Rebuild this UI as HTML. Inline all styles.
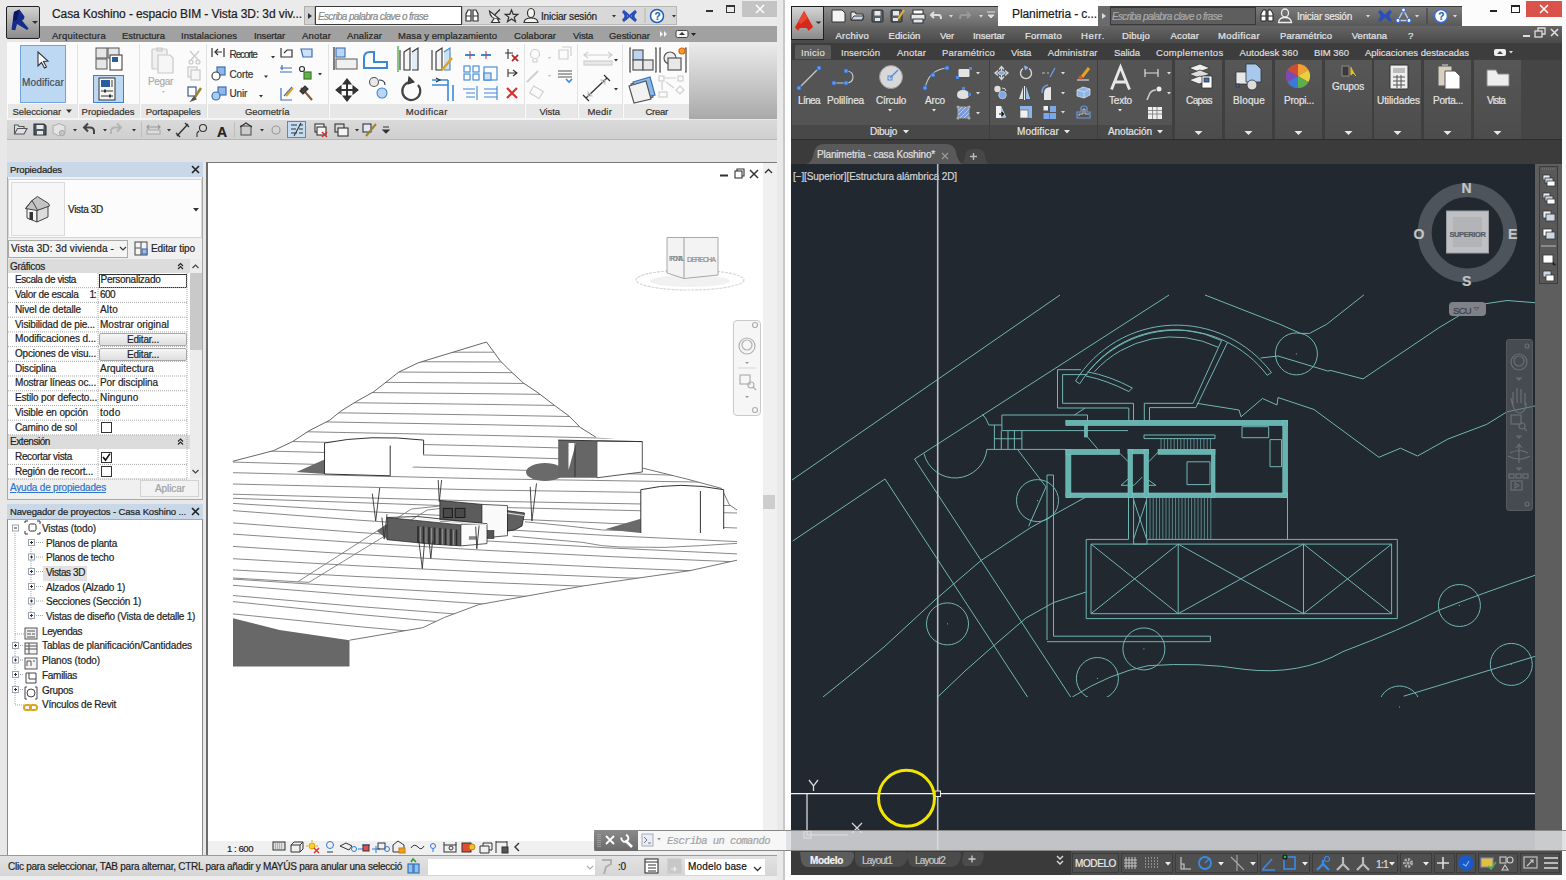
<!DOCTYPE html>
<html><head><meta charset="utf-8">
<style>
*{box-sizing:border-box;margin:0;padding:0}
html,body{width:1566px;height:880px;overflow:hidden;background:#fbfbfb;font-family:"Liberation Sans",sans-serif;font-size:10px;color:#222;position:relative}
.a{position:absolute}
.t{position:absolute;white-space:nowrap;line-height:1;-webkit-text-stroke:0.2px currentColor}
svg{position:absolute;left:0;top:0;overflow:visible}
</style></head>
<body>
<div class="a" style="left:0px;top:0px;width:785px;height:880px;background:#e8e8e8;"></div>
<div class="a" style="left:0px;top:0px;width:785px;height:26px;background:#ebebeb;"></div>
<div class="a" style="left:6px;top:6px;width:34px;height:33px;border:1px solid #222;border-radius:2px;background:linear-gradient(#d2d2d2,#8a8a8a)"></div>
<svg width="1566" height="880"><path d="M14 12 L19.4 9.5 L24.5 16.4 L24 19 L22 20.4 L28.6 28.6 L27 30 L17 24 L15.3 30.2 L11.5 29.7 Z" fill="#142c8c"/><path d="M14 12 L19.4 9.5 L17 20 L13 21 Z" fill="#0a1660"/><path d="M32 21 L38 21 L35 24 Z" fill="#333"/></svg>
<div class="t" style="left:52.0px;top:8.04px;font-size:12px;color:#1b1b1b;letter-spacing:-0.090px;">Casa Koshino - espacio BIM - Vista 3D: 3d viv...</div>
<div class="a" style="left:304px;top:6px;width:11px;height:19px;background:#d3d3d3;border:1px solid #b0b0b0"></div>
<svg width="1566" height="880"><path d="M308 13 L312 16 L308 19 Z" fill="#333"/></svg>
<div class="a" style="left:315px;top:6px;width:147px;height:19px;background:#fff;border:1.5px solid #3a3a3a"></div>
<div class="t" style="left:318.0px;top:11.73px;font-size:10px;color:#8a8a8a;font-style:italic;letter-spacing:-0.654px;">Escriba palabra clave o frase</div>
<div class="a" style="left:462px;top:6px;width:215px;height:19px;background:#d8d8d8;border:1px solid #b8b8b8"></div>
<svg width="1566" height="880" fill="none" stroke="#333" stroke-width="1.2">
<path d="M466 21 L466 14 L468 10 L471 10 L471 21 Z M473 21 L473 10 L476 10 L478 14 L478 21 Z" fill="#fff"/><path d="M466 16 L471 16 M473 16 L478 16"/>
<path d="M489.5 11 Q490 19.5 499.5 19 Z" fill="#f4f4f4"/><path d="M494 18.5 L491.5 22.5 L499.5 22.5 L497.5 19" fill="#f4f4f4"/><path d="M494.5 15 L500 9.5"/>
<path d="M511.5 10 L513.2 14.3 L517.8 14.4 L514.2 17.2 L515.5 21.6 L511.5 19 L507.5 21.6 L508.8 17.2 L505.2 14.4 L509.8 14.3 Z"/>
<ellipse cx="531" cy="13" rx="3.5" ry="4.5" fill="#f4f4f4"/><path d="M524 22.5 Q524.5 18 531 18 Q537.5 18 538 22.5 Z" fill="#f4f4f4"/>
<path d="M612 15 L616 15 L614 17.5 Z" fill="#333" stroke="none"/>
<path d="M623 11 Q629 16 623 21 M636 11 Q630 16 636 21" stroke="#2a4fb8" stroke-width="3"/><path d="M625 12 L634 20 M634 12 L625 20" stroke="#2a4fb8" stroke-width="1.8"/>
<line x1="645" y1="8" x2="645" y2="23" stroke="#bdbdbd"/>
<circle cx="657" cy="16" r="6.5" stroke="#1f5fb8" stroke-width="1.5" fill="#fff"/>
<path d="M672 15 L676 15 L674 17.5 Z" fill="#333" stroke="none"/>
</svg>
<div class="t" style="left:654.5px;top:12.23px;font-size:10px;color:#1f5fb8;font-weight:700;">?</div>
<div class="t" style="left:541.0px;top:12.23px;font-size:10px;color:#1e1e1e;letter-spacing:-0.169px;">Iniciar sesión</div>
<div class="a" style="left:706px;top:10px;width:7px;height:2px;background:#333;"></div>
<div class="a" style="left:726px;top:5px;width:9px;height:8px;background:transparent;border:1.5px solid #333;border-top-width:2px"></div>
<div class="a" style="left:742px;top:1px;width:36px;height:16px;background:#c4c4c4;"></div>
<svg width="1566" height="880"><path d="M756 5 L764 13 M764 5 L756 13" stroke="#fff" stroke-width="1.5"/></svg>
<div class="a" style="left:40px;top:26px;width:738px;height:16px;background:#a1a1a1;"></div>
<div class="t" style="left:52.0px;top:30.66px;font-size:9.5px;color:#262626;letter-spacing:0.230px;">Arquitectura</div>
<div class="t" style="left:122.0px;top:30.66px;font-size:9.5px;color:#262626;letter-spacing:-0.030px;">Estructura</div>
<div class="t" style="left:181.0px;top:30.66px;font-size:9.5px;color:#262626;letter-spacing:0.042px;">Instalaciones</div>
<div class="t" style="left:254.0px;top:30.66px;font-size:9.5px;color:#262626;letter-spacing:-0.152px;">Insertar</div>
<div class="t" style="left:302.0px;top:30.66px;font-size:9.5px;color:#262626;letter-spacing:0.167px;">Anotar</div>
<div class="t" style="left:347.0px;top:30.66px;font-size:9.5px;color:#262626;letter-spacing:0.084px;">Analizar</div>
<div class="t" style="left:398.0px;top:30.66px;font-size:9.5px;color:#262626;letter-spacing:0.066px;">Masa y emplazamiento</div>
<div class="t" style="left:514.0px;top:30.66px;font-size:9.5px;color:#262626;letter-spacing:0.031px;">Colaborar</div>
<div class="t" style="left:573.0px;top:30.66px;font-size:9.5px;color:#262626;letter-spacing:-0.191px;">Vista</div>
<div class="t" style="left:609.0px;top:30.66px;font-size:9.5px;color:#262626;letter-spacing:-0.021px;">Gestionar</div>
<svg width="1566" height="880"><path d="M660 31 L663 34 L660 37 Z M664 31 L667 34 L664 37 Z" fill="#f4f4f4"/>
<rect x="676" y="30.5" width="12" height="7" rx="1.5" fill="#f4f4f4" stroke="#444"/><path d="M679 35 L682 32 L685 35 Z" fill="#333"/><path d="M691 33 L696 33 L693.5 36 Z" fill="#222"/></svg>
<div class="a" style="left:7px;top:42px;width:682px;height:77px;background:#fbfbfb;"></div>
<div class="a" style="left:689px;top:42px;width:88px;height:77px;background:linear-gradient(#ececec,#a9a9a9);"></div>
<div class="a" style="left:8px;top:104px;width:69px;height:14px;background:#e7e7e7;"></div>
<div class="a" style="left:79px;top:104px;width:60px;height:14px;background:#e7e7e7;"></div>
<div class="a" style="left:141px;top:104px;width:65px;height:14px;background:#e7e7e7;"></div>
<div class="a" style="left:208px;top:104px;width:120px;height:14px;background:#e7e7e7;"></div>
<div class="a" style="left:330px;top:104px;width:194px;height:14px;background:#e7e7e7;"></div>
<div class="a" style="left:526px;top:104px;width:51px;height:14px;background:#e7e7e7;"></div>
<div class="a" style="left:579px;top:104px;width:43px;height:14px;background:#e7e7e7;"></div>
<div class="a" style="left:624px;top:104px;width:65px;height:14px;background:#e7e7e7;"></div>
<div class="a" style="left:77px;top:44px;width:1px;height:74px;background:#e2e2e2;"></div>
<div class="a" style="left:139px;top:44px;width:1px;height:74px;background:#e2e2e2;"></div>
<div class="a" style="left:206px;top:44px;width:1px;height:74px;background:#e2e2e2;"></div>
<div class="a" style="left:328px;top:44px;width:1px;height:74px;background:#e2e2e2;"></div>
<div class="a" style="left:524px;top:44px;width:1px;height:74px;background:#e2e2e2;"></div>
<div class="a" style="left:577px;top:44px;width:1px;height:74px;background:#e2e2e2;"></div>
<div class="a" style="left:622px;top:44px;width:1px;height:74px;background:#e2e2e2;"></div>
<div class="a" style="left:7px;top:118px;width:682px;height:2px;background:#f4f4f4;"></div>
<div class="t" style="left:12.6px;top:106.66px;font-size:9.5px;color:#333;letter-spacing:-0.113px;">Seleccionar</div>
<svg width="1566" height="880"><path d="M66 109.5 L72 109.5 L69 113 Z" fill="#333"/></svg>
<div class="t" style="left:81.6px;top:106.66px;font-size:9.5px;color:#333;letter-spacing:-0.033px;">Propiedades</div>
<div class="t" style="left:145.7px;top:106.66px;font-size:9.5px;color:#333;letter-spacing:-0.082px;">Portapapeles</div>
<div class="t" style="left:245.0px;top:106.66px;font-size:9.5px;color:#333;letter-spacing:-0.043px;">Geometría</div>
<div class="t" style="left:405.8px;top:106.66px;font-size:9.5px;color:#333;letter-spacing:0.384px;">Modificar</div>
<div class="t" style="left:539.4px;top:106.66px;font-size:9.5px;color:#333;letter-spacing:-0.091px;">Vista</div>
<div class="t" style="left:587.4px;top:106.66px;font-size:9.5px;color:#333;letter-spacing:0.167px;">Medir</div>
<div class="t" style="left:645.4px;top:106.66px;font-size:9.5px;color:#333;letter-spacing:-0.233px;">Crear</div>
<div class="a" style="left:20px;top:45px;width:46px;height:58px;background:#bdd8f3;border:1px solid #6da3df"></div>
<svg width="1566" height="880"><path d="M38 52 L38 66 L41.5 62.5 L44.5 68 L46.5 67 L43.5 61.5 L48 61 Z" fill="#fff" stroke="#333" stroke-width="1.1"/></svg>
<div class="t" style="left:22.0px;top:77.83px;font-size:10px;color:#3c4b5a;letter-spacing:0.158px;">Modificar</div>
<svg width="1566" height="880">
<rect x="96" y="48" width="11" height="10" fill="#e6e6e6" stroke="#555"/><rect x="108" y="48" width="11" height="10" fill="#e6e6e6" stroke="#555"/>
<rect x="96" y="59" width="11" height="10" fill="#e6e6e6" stroke="#555"/><rect x="110" y="55" width="12" height="15" fill="#fff" stroke="#333"/><rect x="112" y="57" width="6" height="5" fill="#2a5ca0"/>
</svg>
<div class="a" style="left:93px;top:75px;width:31px;height:28px;background:#bdd8f3;border:1px solid #3c7fd2"></div>
<svg width="1566" height="880"><rect x="99" y="78" width="16" height="22" fill="#f5f5f5" stroke="#333"/><rect x="101" y="80" width="9" height="7" fill="#2a5ca0"/><rect x="111" y="80" width="2" height="7" fill="#999"/>
<path d="M101 91 L113 91 M101 96 L113 96" stroke="#333"/><rect x="104" y="89.5" width="2" height="3" fill="#333"/><rect x="109" y="94.5" width="2" height="3" fill="#333"/></svg>
<svg width="1566" height="880" fill="none" stroke="#c9c9c9" stroke-width="1.2">
<rect x="152" y="49" width="15" height="20" rx="1" fill="#f0f0f0"/><path d="M157 48 L162 48 L162 51 L157 51 Z" fill="#e0e0e0"/><path d="M158 55 L170 55 L173 58 L173 73 L158 73 Z" fill="#f6f6f6"/>
<path d="M190 51 L199 61 M199 51 L190 61"/><circle cx="191" cy="62" r="2"/><circle cx="198" cy="62" r="2"/>
<rect x="188" y="67" width="9" height="10" fill="#f6f6f6"/><rect x="191" y="70" width="9" height="10" fill="#f6f6f6"/>
<path d="M162 91 L165 91 L163.5 93 Z" fill="#bbb" stroke="none"/>
<rect x="188" y="87" width="8" height="9" fill="#fff" stroke="#3a5a8a"/><path d="M193 100 L201 88" stroke="#a08030" stroke-width="2.5"/><path d="M191 101 L194 97 L196 99 Z" fill="#555" stroke="#555"/>
</svg>
<div class="t" style="left:148.0px;top:77.23px;font-size:10px;color:#ababab;letter-spacing:-0.338px;">Pegar</div>
<svg width="1566" height="880" stroke="#333" fill="none" stroke-width="1.2">
<path d="M212 48 L212 57 M215 52 L222 52 M218 49 L215 52 L218 55 M224 48 L224 57"/>
<rect x="217" y="67" width="8" height="8" fill="#8fb8e8" stroke="#3a70b8"/><circle cx="216" cy="76" r="4" fill="#fff" stroke="#444"/>
<rect x="218" y="87" width="8" height="8" fill="#8fb8e8" stroke="#3a70b8"/><circle cx="216" cy="96" r="4" fill="#a8cbee" stroke="#3a70b8"/>
<path d="M271 56 L275 56 L273 58.5 Z M264 75.5 L268 75.5 L266 78 Z M259 95 L263 95 L261 97.5 Z" fill="#333" stroke="none"/>
<path d="M281 48 L281 57 L292 57 L292 50 L287 50 L284 53" /><path d="M301 49 L312 49 L312 57 L303 57 Z" fill="#cfe0f5" stroke="#3a70b8"/>
<path d="M280 68 L292 68 M280 72 L292 72 M282 65 L282 70" stroke="#3a70b8"/><circle cx="302" cy="69" r="2.5"/><rect x="304" y="72" width="7" height="7" fill="#6ab04a" stroke="#3a7a2a"/>
<path d="M318 73 L322 73 L320 75.5 Z" fill="#333" stroke="none"/>
<path d="M281 88 L281 100 L292 100 M284 96 L292 87" stroke="#3a70b8"/><path d="M286 96 L293 88" stroke="#e0a020" stroke-width="2"/>
<path d="M301 88 L306 93 L312 100" stroke="#8a5a3a" stroke-width="2.2"/><path d="M300 91 L305 86 L308 89 L303 94 Z" fill="#444"/>
</svg>
<div class="t" style="left:229.6px;top:50.03px;font-size:10px;color:#333;letter-spacing:-1.145px;">Recorte</div>
<div class="t" style="left:229.6px;top:69.53px;font-size:10px;color:#333;letter-spacing:-0.191px;">Corte</div>
<div class="t" style="left:229.6px;top:89.14px;font-size:10px;color:#333;letter-spacing:-0.211px;">Unir</div>
<svg width="1566" height="880" stroke="#333" fill="none" stroke-width="1.1">
<path d="M334 47 L334 70" stroke="#555" stroke-width="1.5"/><rect x="336" y="48" width="9" height="9" fill="#bcd5f0" stroke="#3a70b8"/><rect x="336" y="59" width="21" height="10" fill="#f0f0f0" stroke="#666"/>
<path d="M364 68 L364 58 Q364 52 370 52 L374 52 L374 62 L387 62 L387 68 Z" stroke="#3a88d8" stroke-width="2"/>
<path d="M400 50 L400 70 M404 52 L410 48 L410 70 L404 70 Z" fill="#f5f5f5"/><path d="M398 46 L398 72" stroke="#48a848" stroke-width="1.3"/><path d="M412 52 L418 48 L418 70 L412 70" fill="#e0ecf8"/>
<path d="M432 50 L432 70 M436 52 L442 48 L442 70 L436 70 Z" fill="#f5f5f5"/><path d="M444 52 L450 48 L450 70 L444 70" fill="#cfe0f5" stroke="#3a88d8"/><path d="M442 70 L452 58" stroke="#e0a020" stroke-width="2.5"/>
<path d="M465 55 L475 55 M481 55 L491 55" stroke="#3a88d8" stroke-width="2"/><path d="M470 51 L470 59 M486 51 L486 59" stroke="#d04040"/>
<path d="M508 49 L508 59 M505 53 L513 53 M512 55 L518 61 M518 55 L512 61" /><path d="M512 55 L518 61 M518 55 L512 61" stroke="#d02020" stroke-width="1.5"/>
<path d="M347 80 L347 101 M337 90 L358 90" stroke="#333" stroke-width="2"/><path d="M343 84 L347 79 L351 84 Z M343 96 L347 101 L351 96 Z M341 86 L336 90 L341 94 Z M353 86 L358 90 L353 94 Z" fill="#333"/>
<circle cx="374" cy="82" r="4.5" fill="#e8e8e8" stroke="#555"/><circle cx="382" cy="93" r="5" fill="#bcd5f0" stroke="#3a88d8"/><path d="M379 80 Q385 80 385 85" />
<path d="M411 82 A9 9 0 1 0 418 85" stroke-width="2.2" stroke="#444"/><path d="M409 77 L414 82 L408 84 Z" fill="#444"/>
<path d="M432 80 L448 80 M432 85 L448 85 M448 80 L448 101 M453 85 L453 101" stroke="#3a88d8" stroke-width="1.6"/><path d="M436 78 L440 80 L436 82" />
<rect x="464" y="66" width="6" height="6" stroke="#3a88d8"/><rect x="473" y="66" width="6" height="6" stroke="#3a88d8"/><rect x="464" y="74" width="6" height="6" stroke="#3a88d8"/><rect x="473" y="74" width="6" height="6" stroke="#3a88d8"/>
<rect x="484" y="67" width="13" height="13" stroke="#3a88d8"/><rect x="484" y="73" width="7" height="7" fill="#cfe0f5" stroke="#3a88d8"/>
<path d="M508 69 L508 77 M508 73 L517 73 M513 70 L517 73 L513 76" />
<path d="M463 89 L475 89 M466 93 L475 93 M466 97 L475 97 M477 86 L477 100" stroke="#3a88d8"/>
<path d="M484 89 L497 89 M484 93 L497 93 M484 97 L497 97 M497 86 L497 100" stroke="#3a88d8"/>
<path d="M507 88 L517 98 M517 88 L507 98" stroke="#d83030" stroke-width="2.2"/>
</svg>
<svg width="1566" height="880" stroke="#cfcfcf" fill="none" stroke-width="1.2">
<circle cx="535" cy="54" r="4.5"/><path d="M533 59 L533 62 L537 62 L537 59"/><path d="M548 57 L551 57 L549.5 59 Z" fill="#bbb" stroke="none"/>
<path d="M559 50 L568 50 L568 59 L559 59 Z M562 47 L571 47 L571 56"/>
<path d="M529 80 L538 71 M531 78 L527 82" stroke-width="2"/><path d="M548 75 L551 75 L549.5 77 Z" fill="#bbb" stroke="none"/>
<path d="M558 71 L572 71 M558 74 L572 74 M558 77 L572 77" stroke="#555"/><path d="M566 79 L569 82 L572 79" stroke="#3a88d8" stroke-width="1.6"/>
<rect x="531" y="88" width="11" height="8" transform="rotate(30 536 92)"/>
<path d="M584 55 L612 55 M588 52 L584 55 L588 58 M608 52 L612 55 L608 58"/><rect x="584" y="61" width="28" height="4" fill="#e8e8e8"/>
<path d="M614 59 L618 59 L616 61.5 Z M614 88 L618 88 L616 90.5 Z" fill="#333" stroke="none"/>
<path d="M586 98 L607 78 M583 95 L589 101 M604 75 L610 81" stroke="#333" stroke-width="1.3"/><path d="M588 96 L592 96 L588 92 Z M605 80 L601 80 L605 84 Z" fill="#333"/>
<path d="M631 48 L630 48 L630 72 L631 72 M655 48 L656 48 L656 72 L655 72" stroke="#444"/><rect x="633" y="50" width="10" height="10" fill="#bcd5f0" stroke="#555"/><rect x="633" y="60" width="10" height="10" fill="#e8e8e8" stroke="#555"/><rect x="643" y="60" width="10" height="10" fill="#e8e8e8" stroke="#555"/>
<path d="M661 48 L660 48 L660 72 L661 72 M685 48 L686 48 L686 72 L685 72" stroke="#444"/><circle cx="670" cy="58" r="6" fill="#eee" stroke="#555"/><rect x="668" y="58" width="13" height="12" fill="#e8e8e8" stroke="#555"/><circle cx="682" cy="51" r="3" fill="#f0a020" stroke="#e06010"/>
<path d="M631 84 L648 79 L653 97 L636 101 Z" fill="#e0e0e0" stroke="#555"/><path d="M633 82 L650 77 L655 95 L638 99 Z" fill="#8ab8e8" stroke="#3a70b8"/><path d="M629 86 L646 81 L651 99 L634 103 Z" fill="#f2f2f2" stroke="#555"/>
<rect x="659" y="76" width="5" height="5"/><rect x="678" y="76" width="5" height="5"/><rect x="659" y="92" width="8" height="5"/><path d="M665 78 L676 78 M662 82 L662 90 M666 82 L674 88 M676 90 L680 94 L684 90 L680 86 Z"/>
</svg>
<div class="a" style="left:7px;top:120px;width:770px;height:19px;background:linear-gradient(#dadada,#cfcfcf);"></div>
<div class="a" style="left:7px;top:139px;width:770px;height:1px;background:#b6b6b6;"></div>
<div class="a" style="left:7px;top:140px;width:770px;height:22px;background:#e3e3e3;"></div>
<div class="a" style="left:287px;top:121px;width:19px;height:17px;background:#c5dcf3;border:1px solid #4c8ad8"></div>
<div class="a" style="left:141px;top:122px;width:1px;height:15px;background:#bdbdbd;"></div>
<div class="a" style="left:234px;top:122px;width:1px;height:15px;background:#bdbdbd;"></div>
<svg width="1566" height="880" stroke="#333" fill="none" stroke-width="1.1">
<path d="M14.5 134 L14.5 125 L18 125 L19 126.5 L24 126.5 L24 128 M14.5 134 L17.5 128.5 L27 128.5 L24 134 Z" fill="#dfe3e8" stroke="#555" stroke-width="1.1"/>
<path d="M34 124 L44 124 L46 126 L46 135 L34 135 Z" fill="#4c5866" stroke="#2a3038"/><rect x="36.5" y="125" width="7" height="4" fill="#e8e8e8" stroke="none"/><rect x="37" y="131" width="6" height="3.5" fill="#e8e8e8" stroke="none"/>
<path d="M53 126 L59 123.5 L65 126 L65 133 L59 136 L53 133 Z" stroke="#b0b0b0" fill="#e4e4e4"/><circle cx="62" cy="133" r="2.5" fill="#c8c8c8" stroke="#aaa"/><path d="M73 129 L77 129 L75 131.5 Z M103 129 L107 129 L105 131.5 Z M132 129 L136 129 L134 131.5 Z M167 129 L171 129 L169 131.5 Z M260 129 L264 129 L262 131.5 Z M355 129 L359 129 L357 131.5 Z" fill="#333" stroke="none"/>
<path d="M85 127.5 L90 127.5 Q94 127.5 94 131.5 L94 134 M88 123.5 L84 127.5 L88 131.5" stroke-width="2" stroke="#444" fill="none"/>
<path d="M120 127.5 L115 127.5 Q111 127.5 111 131.5 L111 134 M117 123.5 L121 127.5 L117 131.5" stroke-width="2" stroke="#b4b4b4" fill="none"/>
<path d="M147 127 L160 127 M149 125 L147 127 L149 129 M158 125 L160 127 L158 129" stroke="#999" stroke-width="1.2" fill="none"/><rect x="147" y="130" width="13" height="4" fill="#ddd" stroke="#aaa"/>
<path d="M177 136 L188 124 M176 133 L180 137 M185 123 L189 127" stroke-width="1.4"/>
<circle cx="203" cy="128" r="3.5"/><path d="M197 133 L197 137 M197 133 L199 131"/>
<rect x="241" y="126" width="10" height="9" fill="#ccc" stroke="#555"/><path d="M240 127 L246 123 L252 127"/>
<circle cx="276" cy="130" r="4" stroke="#999"/>
<path d="M291 125 L297 125 M291 129 L296 129 M291 133 L297 133 M299 125 L303 125 M299 129 L303 129 M299 133 L303 133 M294 136 L301 123" stroke="#333"/>
<rect x="315" y="124" width="9" height="8" fill="#f4f4f4"/><rect x="317" y="127" width="9" height="8" fill="#f4f4f4"/><path d="M322 132 L327 137 M327 132 L322 137" stroke="#d83030" stroke-width="1.6"/>
<rect x="335" y="124" width="9" height="8"/><rect x="338" y="128" width="10" height="8" fill="#f4f4f4"/>
<rect x="363" y="124" width="8" height="8" fill="#dde8f4"/><path d="M366 136 L376 124" stroke="#a08030" stroke-width="2"/>
<path d="M383 127 L389 127 M383 130 L389 130 L386 133 Z" fill="#333"/>
</svg>
<div class="t" style="left:217.0px;top:124.85px;font-size:14px;color:#222;font-weight:700;">A</div>
<div class="a" style="left:7px;top:162px;width:196px;height:15px;background:#c8d8e9;"></div>
<div class="t" style="left:10.0px;top:165.36px;font-size:9.5px;color:#222;letter-spacing:-0.124px;">Propiedades</div>
<svg width="1566" height="880"><path d="M192 166 L199 173 M199 166 L192 173" stroke="#222" stroke-width="1.6"/></svg>
<div class="a" style="left:7px;top:177px;width:196px;height:323px;background:#f0f0f0;border:1px solid #a9a9a9;border-top:none"></div>
<div class="a" style="left:8px;top:179px;width:194px;height:59px;background:#fcfcfc;border:1px solid #d4d4d4"></div>
<div class="a" style="left:11px;top:182px;width:54px;height:54px;background:#f6f6f6;border:1px solid #dadada"></div>
<svg width="1566" height="880">
<path d="M27 207.5 L27 218 L37 222 L37 210 L32 202 Z" fill="#f4f4f4" stroke="#444" stroke-width="1"/>
<path d="M37 222 L48 217 L48 206 L37 210 Z" fill="#dcdcdc" stroke="#444" stroke-width="1"/>
<path d="M25.5 208.5 L32 200.5 L37.4 196.5 L48.6 203.5 L49.5 206 L37 210.5 Z" fill="#c4c4c4" stroke="#444" stroke-width="1"/>
<path d="M25.5 208.5 L32 200.5 L38 211" fill="none" stroke="#444" stroke-width="1"/>
<rect x="29.5" y="212" width="3.5" height="8" fill="#333"/>
<path d="M193 208 L199 208 L196 211.5 Z" fill="#333"/>
</svg>
<div class="t" style="left:68.0px;top:204.73px;font-size:10px;color:#222;letter-spacing:-0.328px;">Vista 3D</div>
<div class="a" style="left:8px;top:240px;width:120px;height:18px;background:#f4f4f4;border:1px solid #a9a9a9"></div>
<div class="a" style="left:9px;top:241px;width:108px;height:16px;overflow:hidden">
<div class="t" style="left:2.0px;top:2.64px;font-size:10px;color:#222;letter-spacing:0.134px;">Vista 3D: 3d vivienda - s</div>
</div>
<svg width="1566" height="880" fill="none" stroke="#333" stroke-width="1.1">
<path d="M120 247 L123 250 L126 247"/>
<rect x="135" y="242" width="12" height="13" fill="#f4f4f4" stroke="#555"/><path d="M141 242 L141 255 M135 248 L141 248" stroke="#555"/><rect x="142" y="249" width="5" height="5" fill="#9bbbe0" stroke="#3a6fb0"/>
</svg>
<div class="t" style="left:151.0px;top:243.63px;font-size:10px;color:#222;letter-spacing:-0.094px;">Editar tipo</div>
<div class="a" style="left:8px;top:259px;width:182px;height:219px;background:#ffffff;"></div>
<div class="a" style="left:190px;top:259px;width:12px;height:219px;background:#ececec;"></div>
<div class="a" style="left:190px;top:273px;width:12px;height:77px;background:#c9c9c9;"></div>
<svg width="1566" height="880" fill="none" stroke="#444" stroke-width="1.2">
<path d="M192.5 268 L195.5 265 L198.5 268"/><path d="M192.5 470 L195.5 473 L198.5 470"/>
</svg>
<div class="a" style="left:8px;top:259px;width:182px;height:14px;background:#dcdcdc;"></div>
<div class="t" style="left:10.0px;top:261.54px;font-size:10px;color:#222;letter-spacing:-0.279px;">Gráficos</div>
<div class="a" style="left:8px;top:434.7px;width:182px;height:14.3px;background:#dcdcdc;"></div>
<div class="t" style="left:10.0px;top:437.24px;font-size:10px;color:#222;letter-spacing:-0.436px;">Extensión</div>
<svg width="1566" height="880" fill="none" stroke="#222" stroke-width="1.1">
<path d="M178 266 L180.5 263.5 L183 266 M178 269 L180.5 266.5 L183 269"/>
<path d="M178 441.5 L180.5 439 L183 441.5 M178 444.5 L180.5 442 L183 444.5"/>
</svg>
<div class="t" style="left:15.0px;top:275.44px;font-size:10px;color:#222;letter-spacing:-0.418px;">Escala de vista</div>
<div class="a" style="left:99px;top:273.5px;width:88px;height:14px;background:#fff;border:1px solid #333"></div>
<div class="t" style="left:100.5px;top:275.44px;font-size:10px;color:#222;letter-spacing:-0.260px;">Personalizado</div>
<div class="t" style="left:15.0px;top:290.16px;font-size:10px;color:#222;letter-spacing:-0.314px;">Valor de escala</div>
<div class="t" style="left:100.0px;top:290.16px;font-size:10px;color:#222;letter-spacing:-0.562px;">600</div>
<div class="t" style="left:15.0px;top:304.88px;font-size:10px;color:#222;letter-spacing:-0.148px;">Nivel de detalle</div>
<div class="t" style="left:100.0px;top:304.88px;font-size:10px;color:#222;letter-spacing:0.191px;">Alto</div>
<div class="t" style="left:15.0px;top:319.60px;font-size:10px;color:#222;letter-spacing:-0.153px;">Visibilidad de pie...</div>
<div class="t" style="left:100.0px;top:319.60px;font-size:10px;color:#222;">Mostrar original</div>
<div class="t" style="left:15.0px;top:334.31px;font-size:10px;color:#222;letter-spacing:-0.096px;">Modificaciones d...</div>
<div class="a" style="left:99px;top:332.88px;width:88px;height:13px;background:linear-gradient(#f6f6f6,#dedede);border:1px solid #a8a8a8;border-radius:2px"></div>
<div class="t" style="left:127.0px;top:334.81px;font-size:10px;color:#222;letter-spacing:-0.212px;">Editar...</div>
<div class="t" style="left:15.0px;top:349.04px;font-size:10px;color:#222;letter-spacing:-0.213px;">Opciones de visu...</div>
<div class="a" style="left:99px;top:347.6px;width:88px;height:13px;background:linear-gradient(#f6f6f6,#dedede);border:1px solid #a8a8a8;border-radius:2px"></div>
<div class="t" style="left:127.0px;top:349.54px;font-size:10px;color:#222;letter-spacing:-0.212px;">Editar...</div>
<div class="t" style="left:15.0px;top:363.75px;font-size:10px;color:#222;letter-spacing:-0.180px;">Disciplina</div>
<div class="t" style="left:100.0px;top:363.75px;font-size:10px;color:#222;">Arquitectura</div>
<div class="t" style="left:15.0px;top:378.48px;font-size:10px;color:#222;letter-spacing:-0.202px;">Mostrar líneas oc...</div>
<div class="t" style="left:100.0px;top:378.48px;font-size:10px;color:#222;letter-spacing:-0.106px;">Por disciplina</div>
<div class="t" style="left:15.0px;top:393.19px;font-size:10px;color:#222;letter-spacing:-0.172px;">Estilo por defecto...</div>
<div class="t" style="left:100.0px;top:393.19px;font-size:10px;color:#222;letter-spacing:0.176px;">Ninguno</div>
<div class="t" style="left:15.0px;top:407.92px;font-size:10px;color:#222;letter-spacing:-0.143px;">Visible en opción</div>
<div class="t" style="left:100.0px;top:407.92px;font-size:10px;color:#222;letter-spacing:0.258px;">todo</div>
<div class="t" style="left:15.0px;top:422.64px;font-size:10px;color:#222;letter-spacing:-0.148px;">Camino de sol</div>
<div class="a" style="left:101px;top:422.20000000000005px;width:11px;height:11px;background:#fff;border:1px solid #333"></div>
<div class="t" style="left:15.0px;top:452.07px;font-size:10px;color:#222;letter-spacing:-0.335px;">Recortar vista</div>
<div class="a" style="left:101px;top:451.64px;width:11px;height:11px;background:#fff;border:1px solid #333"></div>
<svg width="1566" height="880"><path d="M103 457.1 L105.5 460.1 L110 453.6" stroke="#111" stroke-width="1.6" fill="none"/></svg>
<div class="t" style="left:15.0px;top:466.80px;font-size:10px;color:#222;letter-spacing:-0.225px;">Región de recort...</div>
<div class="a" style="left:101px;top:466.36px;width:11px;height:11px;background:#fff;border:1px solid #333"></div>
<svg width="1566" height="880" fill="none" stroke="#a8a8a8" stroke-width="1" stroke-dasharray="1 1"><path d="M8 287.7 L187 287.7"/><path d="M8 302.4 L187 302.4"/><path d="M8 317.2 L187 317.2"/><path d="M8 331.9 L187 331.9"/><path d="M8 346.6 L187 346.6"/><path d="M8 361.3 L187 361.3"/><path d="M8 376.0 L187 376.0"/><path d="M8 390.8 L187 390.8"/><path d="M8 405.5 L187 405.5"/><path d="M8 420.2 L187 420.2"/><path d="M8 434.9 L187 434.9"/><path d="M8 464.4 L187 464.4"/><path d="M8 479.1 L187 479.1"/><path d="M98 273 L98 434.7 M98 449 L98 478 M187 273 L187 478" stroke-dasharray="1 1"/></svg>
<div class="t" style="left:89.5px;top:290.24px;font-size:10px;color:#222;letter-spacing:-1.422px;">1:</div>
<div class="t" style="left:10.0px;top:483.04px;font-size:10px;color:#2f74d0;letter-spacing:-0.195px;text-decoration:underline;">Ayuda de propiedades</div>
<div class="a" style="left:140px;top:480px;width:59px;height:17px;background:#f2f2f2;border:1px solid #d2d2d2"></div>
<div class="t" style="left:155.0px;top:483.74px;font-size:10px;color:#a0a0a0;letter-spacing:-0.083px;">Aplicar</div>
<div class="a" style="left:7px;top:500px;width:196px;height:4px;background:#e8e8e8;"></div>
<div class="a" style="left:7px;top:504px;width:196px;height:14.5px;background:#c8d8e9;"></div>
<div class="t" style="left:10.0px;top:507.36px;font-size:9.5px;color:#222;letter-spacing:-0.138px;">Navegador de proyectos - Casa Koshino ...</div>
<svg width="1566" height="880"><path d="M192 508 L199 515 M199 508 L192 515" stroke="#222" stroke-width="1.6"/></svg>
<div class="a" style="left:7px;top:518.5px;width:196px;height:337px;background:#ffffff;border:1px solid #8a8a8a;border-top:1px solid #aaa"></div>
<div class="a" style="left:43px;top:566px;width:44px;height:14.5px;background:#e2e2e2;"></div>
<div class="t" style="left:42.0px;top:524.13px;font-size:10px;color:#1e1e1e;letter-spacing:-0.150px;">Vistas (todo)</div>
<div class="t" style="left:46.0px;top:538.84px;font-size:10px;color:#1e1e1e;letter-spacing:-0.220px;">Planos de planta</div>
<div class="t" style="left:46.0px;top:552.94px;font-size:10px;color:#1e1e1e;letter-spacing:-0.248px;">Planos de techo</div>
<div class="t" style="left:46.0px;top:567.84px;font-size:10px;color:#1e1e1e;letter-spacing:-0.403px;">Vistas 3D</div>
<div class="t" style="left:46.0px;top:582.63px;font-size:10px;color:#1e1e1e;letter-spacing:-0.274px;">Alzados (Alzado 1)</div>
<div class="t" style="left:46.0px;top:597.24px;font-size:10px;color:#1e1e1e;letter-spacing:-0.205px;">Secciones (Sección  1)</div>
<div class="t" style="left:46.0px;top:611.94px;font-size:10px;color:#1e1e1e;letter-spacing:-0.275px;">Vistas de diseño (Vista de detalle 1)</div>
<div class="t" style="left:42.0px;top:626.74px;font-size:10px;color:#1e1e1e;letter-spacing:-0.422px;">Leyendas</div>
<div class="t" style="left:42.0px;top:641.24px;font-size:10px;color:#1e1e1e;letter-spacing:-0.118px;">Tablas de planificación/Cantidades</div>
<div class="t" style="left:42.0px;top:656.24px;font-size:10px;color:#1e1e1e;letter-spacing:-0.114px;">Planos (todo)</div>
<div class="t" style="left:42.0px;top:670.94px;font-size:10px;color:#1e1e1e;letter-spacing:-0.279px;">Familias</div>
<div class="t" style="left:42.0px;top:685.74px;font-size:10px;color:#1e1e1e;letter-spacing:-0.299px;">Grupos</div>
<div class="t" style="left:42.0px;top:700.24px;font-size:10px;color:#1e1e1e;letter-spacing:-0.225px;">Vínculos de Revit</div>
<svg width="1566" height="880" fill="none" stroke="#8a8a8a" stroke-width="1"><path d="M15 533 L15 705 L24 705 M31 541 L31 620 M15 634 L24 634" stroke-dasharray="1 1" stroke="#a0a0a0"/><path d="M34 542.5 L44 542.5" stroke-dasharray="1 1" stroke="#a0a0a0"/><rect x="28.5" y="539.5" width="6" height="6" fill="#fff" stroke="#9aa4b0"/><path d="M30 542.5 L33 542.5 M31.5 541.0 L31.5 544.0" stroke="#333"/><path d="M34 557 L44 557" stroke-dasharray="1 1" stroke="#a0a0a0"/><rect x="28.5" y="554" width="6" height="6" fill="#fff" stroke="#9aa4b0"/><path d="M30 557 L33 557 M31.5 555.5 L31.5 558.5" stroke="#333"/><path d="M34 571.5 L44 571.5" stroke-dasharray="1 1" stroke="#a0a0a0"/><rect x="28.5" y="568.5" width="6" height="6" fill="#fff" stroke="#9aa4b0"/><path d="M30 571.5 L33 571.5 M31.5 570.0 L31.5 573.0" stroke="#333"/><path d="M34 586.5 L44 586.5" stroke-dasharray="1 1" stroke="#a0a0a0"/><rect x="28.5" y="583.5" width="6" height="6" fill="#fff" stroke="#9aa4b0"/><path d="M30 586.5 L33 586.5 M31.5 585.0 L31.5 588.0" stroke="#333"/><path d="M34 601 L44 601" stroke-dasharray="1 1" stroke="#a0a0a0"/><rect x="28.5" y="598" width="6" height="6" fill="#fff" stroke="#9aa4b0"/><path d="M30 601 L33 601 M31.5 599.5 L31.5 602.5" stroke="#333"/><path d="M34 615.5 L44 615.5" stroke-dasharray="1 1" stroke="#a0a0a0"/><rect x="28.5" y="612.5" width="6" height="6" fill="#fff" stroke="#9aa4b0"/><path d="M30 615.5 L33 615.5 M31.5 614.0 L31.5 617.0" stroke="#333"/><path d="M18 645.5 L24 645.5" stroke-dasharray="1 1" stroke="#a0a0a0"/><rect x="12.5" y="642.5" width="6" height="6" fill="#fff" stroke="#9aa4b0"/><path d="M14 645.5 L17 645.5 M15.5 644.0 L15.5 647.0" stroke="#333"/><path d="M18 660 L24 660" stroke-dasharray="1 1" stroke="#a0a0a0"/><rect x="12.5" y="657" width="6" height="6" fill="#fff" stroke="#9aa4b0"/><path d="M14 660 L17 660 M15.5 658.5 L15.5 661.5" stroke="#333"/><path d="M18 674.5 L24 674.5" stroke-dasharray="1 1" stroke="#a0a0a0"/><rect x="12.5" y="671.5" width="6" height="6" fill="#fff" stroke="#9aa4b0"/><path d="M14 674.5 L17 674.5 M15.5 673.0 L15.5 676.0" stroke="#333"/><path d="M18 689.5 L24 689.5" stroke-dasharray="1 1" stroke="#a0a0a0"/><rect x="12.5" y="686.5" width="6" height="6" fill="#fff" stroke="#9aa4b0"/><path d="M14 689.5 L17 689.5 M15.5 688.0 L15.5 691.0" stroke="#333"/><rect x="12.5" y="525" width="6" height="6" fill="#fff" stroke="#9aa4b0"/><path d="M14 528 L17 528" stroke="#333"/><path d="M25 523 L25 521 L28 521 M37 521 L40 521 L40 524 M40 532 L40 534 L37 534 M28 534 L25 534 L25 531" stroke="#333"/><rect x="29" y="524" width="7" height="7" rx="1.5" stroke="#333"/><rect x="25" y="628" width="12" height="11" fill="#eee" stroke="#555"/><path d="M27 631 L35 631 M27 634 L31 634 M32 634 L35 634 M27 637 L35 637" stroke="#555"/><rect x="25" y="643" width="12" height="11" fill="#f4f4f4" stroke="#555"/><path d="M25 646 L37 646 M25 649 L37 649 M29 643 L29 654" stroke="#555"/><rect x="25" y="658" width="12" height="11" fill="#f4f4f4" stroke="#555"/><path d="M27 666 L27 661 L31 661 L31 666 M33 661 L35 661" stroke="#555"/><path d="M26 683 L26 673 L36 673 L36 683 Z M29 673 L29 679 L36 679" stroke="#444"/><path d="M27 687 L25 687 L25 699 L27 699 M35 687 L37 687 L37 699 L35 699" stroke="#444"/><circle cx="31" cy="693" r="4" stroke="#444"/><rect x="24" y="705" width="7" height="5" rx="2.5" stroke="#d9a520" stroke-width="2"/><rect x="30" y="705" width="7" height="5" rx="2.5" stroke="#d9a520" stroke-width="2"/></svg>
<div class="a" style="left:206px;top:162px;width:572px;height:694px;background:#ffffff;border-left:2px solid #6c6c6c;border-top:1px solid #7a7a7a"></div>
<div class="a" style="left:763px;top:163px;width:14px;height:678px;background:#f0f0f0;"></div>
<div class="a" style="left:763px;top:495px;width:12px;height:14px;background:#cdcdcd;"></div>
<div class="a" style="left:208px;top:841px;width:569px;height:14px;background:#f0f0f0;"></div>
<svg width="1566" height="880" fill="none" stroke="#333" stroke-width="1.1">
<path d="M720 175.5 L728 175.5" stroke-width="2"/><rect x="735" y="171" width="7" height="7"/><path d="M737 171 L737 169 L744 169 L744 176 L742 176"/>
<path d="M750 170 L758 178 M758 170 L750 178" stroke-width="1.5"/><path d="M765 173 L768.5 169.5 L772 173" stroke-width="1.3"/>
</svg>
<svg width="1566" height="880">
<ellipse cx="690" cy="280" rx="54" ry="10" fill="none" stroke="#d6d6d6" stroke-width="1.2" stroke-dasharray="3 1"/>
<ellipse cx="690" cy="281" rx="40" ry="6" fill="#eeeeee" opacity="0.8"/>
<path d="M667 237.5 L718 237.5 L718 275 L684 278.5 L667 273 Z" fill="#f3f3f3" stroke="#a8a8a8"/>
<path d="M684 238 L684 278" stroke="#b0b0b0" stroke-width="1.3"/>
</svg>
<div class="t" style="left:669.0px;top:256.20px;font-size:6.5px;color:#8a8a8a;letter-spacing:-2.408px;">FRONTAL</div>
<div class="t" style="left:687.0px;top:255.77px;font-size:7px;color:#8a8a8a;letter-spacing:-0.891px;">DERECHA</div>
<div class="a" style="left:733px;top:320px;width:28px;height:96px;background:#f6f6f6;border:1px solid #c9c9c9;border-radius:4px"></div>
<svg width="1566" height="880" fill="none" stroke="#b0b0b0" stroke-width="1.2">
<circle cx="755" cy="325" r="2.5"/><circle cx="755" cy="410" r="2.5"/>
<circle cx="747" cy="346" r="8"/><circle cx="747" cy="345" r="5"/>
<path d="M745 362 L749 362 L747 364 Z M745 396 L749 396 L747 398 Z" fill="#999" stroke="none"/>
<path d="M738 368 L756 368" stroke="#ddd"/>
<rect x="740" y="375" width="10" height="9"/><circle cx="751" cy="385" r="3"/><path d="M753 387 L756 390"/>
</svg>
<svg width="1566" height="880">
<defs><clipPath id="tclip"><polygon points="232.7,461.3 273.3,450.7 292.6,441.6 309,430.8 329.3,420.4 340.9,411.1 356.3,401.5 373.7,391.8 398.8,372.1 418.2,362.8 453,352.2 486.5,342 500.3,360.9 510.9,371.5 523.5,383.1 538,392.8 554.4,405.3 568.9,416 580.4,427.5 595.9,437.2 642.3,441.6 642.3,468 686.7,479 721.5,488.4 729.4,504.8 737,510 737,560.2 689.8,570.7 584.3,585.8 478.8,604.6 444.3,617.5 422.7,627.7 349.5,640.2 279.5,630 233,618.2"/></clipPath></defs>
<g clip-path="url(#tclip)" fill="none" stroke="#7a7a7a" stroke-width="0.9"><path d="M233,352.2 L485,352.2 L737,352.2 M233,361.3 L485,361.9 L737,362.7 M233,371.2 L485,372.5 L737,374.0 M233,381.2 L485,383.1 L737,385.4 M233,391.2 L485,393.7 L737,396.7 M233,401.2 L485,404.4 L737,408.2 M233,411.2 L485,415.0 L737,419.5 M233,420.3 L485,424.7 L737,430.0 M233,430.3 L485,435.3 L737,441.3 M233,440.2 L485,445.9 L737,452.7 M233,450.2 L485,456.5 L737,464.1 M233,462.1 L485,469.0 L737,477.3 M233,472.7 Q485,479.9 737,482.6 M233,484.0 Q485,491.1 737,493.8 M233,494.2 Q485,502.4 737,505.7 M233,498.3 Q485,508.5 737,513.0 M233,503.4 Q485,519.8 737,528.0 M233,510.6 Q485,531.0 737,541.6 M233,522.9 Q485,543.3 737,553.9 M233,534.1 Q485,552.5 737,561.9 M233,546.4 Q485,563.7 737,572.5 M233,558.7 Q485,574.0 737,581.6 M233,569.9 Q485,584.2 737,591.2 M233,579.1 Q485,596.5 737,605.3 M233,585.3 Q485,606.7 737,617.9 M233,595.5 Q485,619.0 737,631.5 M233,601.6 Q485,629.0 737,643.8 M233,613.9 Q485,641.0 737,655.7"/>
<path d="M297.7,581.8 L411.4,509 L440,506 M309,582.3 L427.3,510 L452,507 M233,578 L297.7,581.8 L309,582.3" />
<path d="M512.7,536.2 L582.3,542.3 Q602,546.5 620,547 L664,547.4 Q700,546 737.8,543.3 M525,521.8 L568,526 L602.7,530 L641.6,531" />
</g>
<path d="M232.7,461.3 L273.3,450.7 L292.6,441.6 L309,430.8 L329.3,420.4 L340.9,411.1 L356.3,401.5 L373.7,391.8 L398.8,372.1 L418.2,362.8 L453,352.2 L486.5,342 L500.3,360.9 L510.9,371.5 L523.5,383.1 L538,392.8 L554.4,405.3 L568.9,416 L580.4,427.5 L595.9,437.2" fill="none" stroke="#555" stroke-width="0.9"/>
<path d="M642.3,468 L686.7,479 L721.5,488.4 L729.4,504.8 L737,510 M737,560.2 L689.8,570.7 L584.3,585.8 L478.8,604.6 L444.3,617.5 L422.7,627.7 L349.5,640.2" fill="none" stroke="#666" stroke-width="0.9"/>
<polygon points="233,618.2 279.5,630 349.5,640.2 349.5,666.4 233,666.4" fill="#686868"/>
<!-- box 1 -->
<polygon points="296.5,472 324.5,459.4 324.5,474" fill="#6a6a6a"/>
<polygon points="324.5,443 370,438 423.6,440.1 423.6,454.6 405,476 324.5,474" fill="#fff"/>
<path d="M324.5,474 L324.5,443 Q370,434 423.6,440.1 L423.6,454.6 M390.2,445.5 L390.2,475.8 M324.5,474 L390.2,475.8" stroke="#333" fill="none" stroke-width="1"/>
<!-- box 2 -->
<ellipse cx="545" cy="472" rx="19" ry="9" fill="#6a6a6a"/>
<polygon points="558.2,440.1 596.9,441 596.9,477.8 558.2,477.8" fill="#666"/>
<polygon points="568.5,443 576,443 568.5,470" fill="#fff"/>
<path d="M575 443 L575 477" stroke="#333"/>
<polygon points="596.9,441 642.3,441.6 642.3,472 596.9,477.8" fill="#fff" stroke="#444" stroke-width="0.9"/>
<path d="M558.2,440.1 L642.3,441.6" stroke="#333"/>
<!-- box 3 -->
<polygon points="605,529.3 640.8,518.7 640.8,533" fill="#6a6a6a"/>
<polygon points="640.8,489.7 680,484 723.7,489.7 723.7,529 700.4,533 640.8,533" fill="#fff"/>
<path d="M640.8,533 L640.8,489.7 Q680,481 723.7,489.7 L723.7,529 M700.4,491 L700.4,533" stroke="#333" fill="none" stroke-width="1"/>
<!-- house -->
<polygon points="376.8,531 387,524 387,539" fill="#6a6a6a"/>
<polygon points="387,517.5 460.9,524.9 460.9,545.9 430,544 387,539.7" fill="#5e5e5e" stroke="#222" stroke-width="0.7"/>
<path d="M418 526 L418 543 M423.5 526.5 L423.5 543.5 M429 527 L429 544 M434.5 527.5 L434.5 544.5 M440 528 L440 545 M445.5 528.5 L445.5 545 M451 529 L451 545.5 M456.5 529.5 L456.5 545.5" stroke="#2a2a2a" stroke-width="1.6"/>
<path d="M420.5 527 L420.5 542 M426 527.5 L426 543 M431.5 528 L431.5 543.5 M437 528.5 L437 544 M442.5 529 L442.5 544.5 M448 529.5 L448 545 M453.5 530 L453.5 545" stroke="#9a9a9a" stroke-width="0.8"/>
<polygon points="439.9,500.5 481.9,504.4 481.9,523 439.9,521" fill="#5c5c5c" stroke="#222" stroke-width="0.8"/>
<rect x="443.3" y="508.4" width="9.1" height="9.1" fill="#4a4a4a" stroke="#1a1a1a" stroke-width="1"/>
<rect x="455.2" y="508.4" width="9.7" height="9.1" fill="#4a4a4a" stroke="#1a1a1a" stroke-width="1"/>
<polygon points="481.9,504.4 507.5,505.6 507.5,535.7 481.9,538" fill="#fafafa" stroke="#333" stroke-width="0.8"/>
<polygon points="460.9,524.3 487,523.75 487,543.6 460.9,545.9" fill="#fbfbfb" stroke="#333" stroke-width="0.8"/>
<path d="M387,517.5 L417.7,516.5 L487,523.75" stroke="#333" fill="none" stroke-width="0.9"/>
<path d="M417.7,518.5 L487,524.5" stroke="#eee" stroke-width="1.2"/>
<rect x="487.6" y="530.6" width="6.3" height="7.9" fill="#555" stroke="#222" stroke-width="0.6"/>
<rect x="468.9" y="536.2" width="7.9" height="3.5" fill="#888"/>
<path d="M507.5,510.7 L524.5,513 L522,526 Q515,531 507.5,531.1 Z" fill="#606060" stroke="#222" stroke-width="0.8"/>
<path d="M507.5,513 L524,515.5" stroke="#ddd" stroke-width="1.2"/>
<!-- trees -->
<path d="M372.3,493.6 L375.7,520.9 L379.7,488 M438.2,480 L439.3,501.6 L441.6,480 M381.9,517.5 L384.2,539.1 L387,514.1 M418.9,541.4 L422.3,568.6 L424.5,542.5 M429.1,541.4 L430.8,558.4 L432.5,541.4 M475.7,526.6 L476.8,548.75 L479.1,525.5 M530.2,486.8 L531.9,520.9 L536.5,483.4" stroke="#333" stroke-width="0.9" fill="none"/>
</svg>
<div class="t" style="left:227.0px;top:843.96px;font-size:9.5px;color:#222;letter-spacing:-0.438px;">1 : 600</div>
<svg width="1566" height="880" fill="none" stroke="#333" stroke-width="1">
<rect x="273" y="842" width="12" height="8" fill="#ddd"/><path d="M275 844 L283 844 M275 846 L283 846 M275 848 L283 848" stroke="#888" stroke-dasharray="1 1"/>
<path d="M291 852 L291 845 L294 842 L303 842 L303 849 L300 852 Z M291 845 L300 845 L303 842 M300 845 L300 852"/>
<circle cx="312" cy="846" r="3" fill="#f8d030" stroke="#e0a000"/><path d="M312 840 L312 842 M306 846 L308 846 M316 846 L318 846" stroke="#e0a000"/><path d="M314 848 L319 853 M319 848 L314 853" stroke="#d83030" stroke-width="1.4"/>
<circle cx="330" cy="845" r="3.5" stroke="#2a7ad8"/><path d="M327 852 L333 852" stroke="#333"/>
<path d="M340 846 L346 843 L352 846 L349 850 Z" /><circle cx="354" cy="849" r="2.5" stroke="#2a7ad8"/>
<path d="M358 849 L366 849 M362 845 L370 845" stroke="#2a7ad8"/><rect x="363" y="845" width="6" height="6" fill="#e05050" stroke="#333"/>
<path d="M376 846 L376 853 M372 849 L380 849" stroke="#2a7ad8"/><rect x="378" y="843" width="7" height="6" stroke="#333"/><circle cx="387" cy="849" r="2.5" stroke="#2a7ad8"/>
<path d="M393 852 L393 845 L398 841 L404 845 L404 852 Z"/><rect x="399" y="848" width="6" height="5" fill="#f0a020" stroke="#c08010"/>
<path d="M411 848 Q414 843 418 847 Q421 851 424 846" />
<circle cx="433" cy="846" r="2.5" stroke="#2a7ad8"/><path d="M433 849 L433 852" stroke="#2a7ad8"/>
<rect x="444" y="845" width="12" height="7"/><path d="M444 845 L444 842 M456 842 L456 845"/><circle cx="451" cy="848" r="2"/>
<rect x="462" y="843" width="9" height="9" fill="#e05030" stroke="#333"/><circle cx="472" cy="847" r="3" fill="#f0c030" stroke="#c08010"/>
<path d="M480 846 L489 846 L489 853 L480 853 Z M483 846 L483 843 L492 843 L492 850 L489 850"/>
<path d="M496 841 L496 853 M496 842 L507 842 M507 841 L507 853"/><rect x="502" y="847" width="6" height="6" fill="#555"/>
<path d="M519 843 L515 847 L519 851" stroke-width="1.4"/>
</svg>
<div class="a" style="left:0px;top:855px;width:777px;height:1px;background:#9a9a9a;"></div>
<div class="a" style="left:0px;top:856px;width:777px;height:20px;background:linear-gradient(#e2e2e2,#d6d6d6);"></div>
<div class="a" style="left:0px;top:876px;width:785px;height:4px;background:#ededed;"></div>
<div class="t" style="left:8.0px;top:861.74px;font-size:10px;color:#1e1e1e;letter-spacing:-0.253px;">Clic para seleccionar, TAB para alternar, CTRL para añadir y MAYÚS para anular una selecció</div>
<div class="a" style="left:428px;top:859px;width:167px;height:16px;background:#fff;"></div>
<svg width="1566" height="880" fill="none" stroke="#444" stroke-width="1.1">
<rect x="408" y="864" width="5" height="9" fill="#8fc0ee" stroke="#2a6ab8"/><rect x="414" y="864" width="5" height="9" fill="#8fc0ee" stroke="#2a6ab8"/><path d="M411 862 L413 859 L416 862" stroke="#2a9a3a" stroke-width="1.6"/>
<path d="M587 866 L590 869 L593 866" stroke="#aaa"/>
<path d="M602 860 L611 860 L611 864 L606 867 L604 874" stroke="#b0b0b0" stroke-width="2"/>
<rect x="645" y="859" width="13" height="14" fill="#fff" stroke="#333"/><path d="M645 862 L658 862 M648 865 L656 865 M648 868 L656 868 M648 871 L656 871" stroke="#333"/>
<rect x="668" y="859" width="13" height="14" fill="#c8c8c8" stroke="#c8c8c8"/><path d="M671 869 L676 869 M674 867 L676 869 L674 871" stroke="#eee"/>
</svg>
<div class="t" style="left:618.0px;top:862.24px;font-size:10px;color:#222;letter-spacing:-0.172px;">:0</div>
<div class="a" style="left:685px;top:859px;width:80px;height:16px;background:#fff;"></div>
<div class="t" style="left:688.0px;top:862.24px;font-size:10px;color:#111;letter-spacing:0.158px;">Modelo base</div>
<svg width="1566" height="880"><path d="M754 867 L757.5 870.5 L761 867" fill="none" stroke="#333" stroke-width="1.3"/></svg>
<div class="a" style="left:777px;top:0px;width:6px;height:880px;background:#e9e9e9;"></div>
<div class="a" style="left:783px;top:0px;width:2px;height:880px;background:#c8c8c8;"></div>
<div class="a" style="left:785px;top:0px;width:6px;height:880px;background:#fdfdfd;"></div>
<div class="a" style="left:791px;top:0px;width:771px;height:880px;background:#fcfcfc;"></div>
<div class="a" style="left:823px;top:6px;width:175px;height:20px;background:linear-gradient(#8e8e8e,#686868);border-top:1px solid #333"></div>
<div class="a" style="left:998px;top:0px;width:100px;height:26px;background:#ffffff;"></div>
<div class="t" style="left:1012.0px;top:8.14px;font-size:12px;color:#1a1a1a;letter-spacing:-0.095px;">Planimetria - c...</div>
<div class="a" style="left:1098px;top:6px;width:364px;height:20px;background:linear-gradient(#7a7a7a,#585858);border-top:1px solid #3a3a3a"></div>
<div class="a" style="left:1098px;top:6px;width:12px;height:20px;background:#6b6b6b;"></div>
<div class="a" style="left:1110px;top:7px;width:146px;height:18px;background:#5e5e5e;border:1px solid #383838"></div>
<div class="t" style="left:1112.0px;top:11.73px;font-size:10px;color:#a9a9a9;font-style:italic;letter-spacing:-0.654px;">Escriba palabra clave o frase</div>
<div class="t" style="left:1297.0px;top:12.23px;font-size:10px;color:#e8e8e8;letter-spacing:-0.240px;">Iniciar sesión</div>
<svg width="1566" height="880" fill="none" stroke="#eee" stroke-width="1.2">
<path d="M1102 13 L1106 16 L1102 19 Z" fill="#ddd" stroke="none"/>
<path d="M1261 21 L1261 14 L1263 10 L1266 10 L1266 21 Z M1268 21 L1268 10 L1271 10 L1273 14 L1273 21 Z" fill="#fff" stroke="#222" stroke-width="1"/><path d="M1261 16 L1266 16 M1268 16 L1273 16" stroke="#222"/>
<ellipse cx="1285" cy="13" rx="3.5" ry="4" fill="none" stroke="#eee" stroke-width="1.3"/><path d="M1278.5 22.5 Q1279 17.5 1285 17.5 Q1291 17.5 1291.5 22.5 Z" fill="none" stroke="#eee" stroke-width="1.3"/>
<path d="M1366 15 L1370 15 L1368 17.5 Z M1415 15 L1419 15 L1417 17.5 Z M1453 15 L1457 15 L1455 17.5 Z" fill="#ddd" stroke="none"/>
<path d="M1379 11 Q1385 16 1379 21 M1391 11 Q1385 16 1391 21" stroke="#2a4fb8" stroke-width="3"/><path d="M1381 12 L1389 20 M1389 12 L1381 20" stroke="#2a4fb8" stroke-width="1.8"/>
<path d="M1403.5 10 L1398 20.5 L1409 20.5 Z" stroke="#b8cef0" stroke-width="1.4"/><circle cx="1403.5" cy="10" r="2" fill="#fff" stroke="#3a6fd8"/><circle cx="1398" cy="20.5" r="2" fill="#fff" stroke="#3a6fd8"/><circle cx="1409" cy="20.5" r="2" fill="#fff" stroke="#3a6fd8"/>
<line x1="1427" y1="8" x2="1427" y2="24" stroke="#444"/>
<circle cx="1441" cy="16" r="6.5" fill="#fff" stroke="#3a6fd8" stroke-width="1.5"/>
</svg>
<div class="t" style="left:1438.3px;top:12.23px;font-size:10px;color:#1f5fb8;font-weight:700;">?</div>
<div class="a" style="left:1490px;top:10px;width:7px;height:2px;background:#222;"></div>
<div class="a" style="left:1511px;top:5px;width:9px;height:8px;background:transparent;border:1.5px solid #222;border-top-width:2px"></div>
<div class="a" style="left:1526px;top:1px;width:36px;height:16px;background:#d9534a;"></div>
<svg width="1566" height="880"><path d="M1540 5 L1548 13 M1548 5 L1540 13" stroke="#fff" stroke-width="1.6"/></svg>
<div class="a" style="left:791px;top:6px;width:33px;height:34px;border:1px solid #1e1e1e;background:linear-gradient(#d4d4d4,#8a8a8a)"></div>
<svg width="1566" height="880">
<path d="M804.1 11 L813.1 27.1 L808.5 30.7 L806.7 27.9 L799.8 27.9 L798.3 30.7 L794.9 27.6 Z" fill="#d42a1c"/><path d="M804.1 11 L808 18 L801 24 L798 22 Z" fill="#e8462e"/>
<path d="M815.5 21.5 L821.5 21.5 L818.5 24 Z" fill="#333"/>
</svg>
<svg width="1566" height="880" stroke="#333" stroke-width="1">
<path d="M832 10 L842 10 L845 13 L845 22 L832 22 Z" fill="#f4f4f4"/>
<path d="M851 20 L851 12 L855 12 L856 14 L863 14 L863 20 Z" fill="#e8e8e8"/><path d="M851 20 L854 16 L864 16 L862 20 Z" fill="#c8d8e8"/>
<rect x="872" y="10" width="11" height="12" rx="1" fill="#56606a" stroke="#2a2e33"/><rect x="874.5" y="11" width="6" height="4.5" fill="#e8e8e8" stroke="none"/><rect x="875" y="18" width="5" height="3" fill="#e8e8e8" stroke="none"/>
<rect x="891" y="10" width="11" height="12" rx="1" fill="#56606a" stroke="#2a2e33"/><rect x="893" y="11" width="6" height="4.5" fill="#e8e8e8" stroke="none"/><rect x="893" y="18" width="5" height="3" fill="#e8e8e8" stroke="none"/><path d="M898 19 L904 10" stroke="#e8b030" stroke-width="2.2"/>
<rect x="911" y="14" width="14" height="6" rx="1" fill="#e8e8e8"/><rect x="913" y="10" width="10" height="4" fill="#fff"/><rect x="913" y="19" width="10" height="4" fill="#dde8f4"/>
<path d="M931 15 L939 15 Q941 15 941 19 M934 12 L931 15 L934 18" fill="none" stroke="#ddd" stroke-width="2"/>
<path d="M949 15 L953 15 L951 17.5 Z M979 15 L983 15 L981 17.5 Z" fill="#ddd" stroke="none"/>
<path d="M970 15 L962 15 Q960 15 960 19 M967 12 L970 15 L967 18" fill="none" stroke="#999" stroke-width="2"/>
<path d="M987 12 L995 12 M988 15 L994 15 L991 18 Z" fill="#ddd" stroke="#ddd"/>
</svg>
<div class="a" style="left:824px;top:26px;width:738px;height:17px;background:linear-gradient(#656565,#4a4a4a);"></div>
<div class="a" style="left:791px;top:40px;width:33px;height:3px;background:#4a4a4a;"></div>
<div class="t" style="left:835.5px;top:30.66px;font-size:9.5px;color:#e6e6e6;letter-spacing:0.259px;">Archivo</div>
<div class="t" style="left:888.5px;top:30.66px;font-size:9.5px;color:#e6e6e6;letter-spacing:0.118px;">Edición</div>
<div class="t" style="left:940.0px;top:30.66px;font-size:9.5px;color:#e6e6e6;letter-spacing:-0.089px;">Ver</div>
<div class="t" style="left:973.0px;top:30.66px;font-size:9.5px;color:#e6e6e6;letter-spacing:-0.027px;">Insertar</div>
<div class="t" style="left:1025.0px;top:30.66px;font-size:9.5px;color:#e6e6e6;letter-spacing:0.232px;">Formato</div>
<div class="t" style="left:1081.0px;top:30.66px;font-size:9.5px;color:#e6e6e6;letter-spacing:0.681px;">Herr.</div>
<div class="t" style="left:1122.0px;top:30.66px;font-size:9.5px;color:#e6e6e6;letter-spacing:0.177px;">Dibujo</div>
<div class="t" style="left:1170.6px;top:30.66px;font-size:9.5px;color:#e6e6e6;letter-spacing:0.172px;">Acotar</div>
<div class="t" style="left:1218.0px;top:30.66px;font-size:9.5px;color:#e6e6e6;letter-spacing:0.384px;">Modificar</div>
<div class="t" style="left:1280.0px;top:30.66px;font-size:9.5px;color:#e6e6e6;letter-spacing:0.071px;">Paramétrico</div>
<div class="t" style="left:1351.7px;top:30.66px;font-size:9.5px;color:#e6e6e6;letter-spacing:0.089px;">Ventana</div>
<div class="t" style="left:1408.0px;top:30.66px;font-size:9.5px;color:#e6e6e6;">?</div>
<svg width="1566" height="880" fill="none" stroke="#ddd" stroke-width="1.3">
<path d="M1523 36 L1530 36" stroke-width="2"/><rect x="1535" y="31" width="7" height="6"/><path d="M1538 31 L1538 28 L1545 28 L1545 34 L1542 34"/>
<path d="M1551 29 L1558 36 M1558 29 L1551 36" stroke-width="1.6"/>
</svg>
<div class="a" style="left:791px;top:43px;width:771px;height:16px;background:#3d3d3d;"></div>
<div class="a" style="left:795px;top:45px;width:36px;height:15px;background:#5a5a5a;border-radius:2px 2px 0 0"></div>
<div class="t" style="left:801.0px;top:47.66px;font-size:9.5px;color:#dedede;letter-spacing:0.302px;">Inicio</div>
<div class="t" style="left:841.0px;top:47.66px;font-size:9.5px;color:#dedede;letter-spacing:0.049px;">Inserción</div>
<div class="t" style="left:897.0px;top:47.66px;font-size:9.5px;color:#dedede;letter-spacing:0.167px;">Anotar</div>
<div class="t" style="left:942.0px;top:47.66px;font-size:9.5px;color:#dedede;letter-spacing:0.162px;">Paramétrico</div>
<div class="t" style="left:1011.0px;top:47.66px;font-size:9.5px;color:#dedede;letter-spacing:-0.191px;">Vista</div>
<div class="t" style="left:1047.7px;top:47.66px;font-size:9.5px;color:#dedede;letter-spacing:0.178px;">Administrar</div>
<div class="t" style="left:1114.0px;top:47.66px;font-size:9.5px;color:#dedede;letter-spacing:-0.070px;">Salida</div>
<div class="t" style="left:1156.0px;top:47.66px;font-size:9.5px;color:#dedede;letter-spacing:0.301px;">Complementos</div>
<div class="t" style="left:1239.6px;top:47.66px;font-size:9.5px;color:#dedede;letter-spacing:0.024px;">Autodesk 360</div>
<div class="t" style="left:1314.0px;top:47.66px;font-size:9.5px;color:#dedede;letter-spacing:-0.056px;">BIM 360</div>
<div class="t" style="left:1365.0px;top:47.66px;font-size:9.5px;color:#dedede;letter-spacing:-0.025px;">Aplicaciones destacadas</div>
<svg width="1566" height="880"><rect x="1494" y="49" width="12" height="7" rx="2" fill="#eee"/><path d="M1497 54 L1500 51 L1503 54 Z" fill="#444"/><path d="M1509 51 L1513 51 L1511 53.5 Z" fill="#ddd"/></svg>
<div class="a" style="left:791px;top:59px;width:771px;height:80px;background:#3f3f3f;"></div>
<div class="a" style="left:792px;top:60px;width:197px;height:65px;background:#545454;"></div>
<div class="a" style="left:792px;top:125px;width:197px;height:14px;background:#484848;"></div>
<div class="a" style="left:990px;top:60px;width:107px;height:65px;background:#545454;"></div>
<div class="a" style="left:990px;top:125px;width:107px;height:14px;background:#484848;"></div>
<div class="a" style="left:1098px;top:60px;width:74px;height:65px;background:#545454;"></div>
<div class="a" style="left:1098px;top:125px;width:74px;height:14px;background:#484848;"></div>
<div class="a" style="left:1175px;top:60px;width:47px;height:79px;background:linear-gradient(#575757,#4c4c4c);"></div>
<svg width="1566" height="880"><path d="M1194.5 131 L1202.5 131 L1198.5 135 Z" fill="#e8e8e8"/></svg>
<div class="a" style="left:1225px;top:60px;width:47px;height:79px;background:linear-gradient(#575757,#4c4c4c);"></div>
<svg width="1566" height="880"><path d="M1244.5 131 L1252.5 131 L1248.5 135 Z" fill="#e8e8e8"/></svg>
<div class="a" style="left:1275px;top:60px;width:47px;height:79px;background:linear-gradient(#575757,#4c4c4c);"></div>
<svg width="1566" height="880"><path d="M1294.5 131 L1302.5 131 L1298.5 135 Z" fill="#e8e8e8"/></svg>
<div class="a" style="left:1325px;top:60px;width:47px;height:79px;background:linear-gradient(#575757,#4c4c4c);"></div>
<svg width="1566" height="880"><path d="M1344.5 131 L1352.5 131 L1348.5 135 Z" fill="#e8e8e8"/></svg>
<div class="a" style="left:1374px;top:60px;width:47px;height:79px;background:linear-gradient(#575757,#4c4c4c);"></div>
<svg width="1566" height="880"><path d="M1393.5 131 L1401.5 131 L1397.5 135 Z" fill="#e8e8e8"/></svg>
<div class="a" style="left:1424px;top:60px;width:47px;height:79px;background:linear-gradient(#575757,#4c4c4c);"></div>
<svg width="1566" height="880"><path d="M1443.5 131 L1451.5 131 L1447.5 135 Z" fill="#e8e8e8"/></svg>
<div class="a" style="left:1474px;top:60px;width:47px;height:79px;background:linear-gradient(#575757,#4c4c4c);"></div>
<svg width="1566" height="880"><path d="M1493.5 131 L1501.5 131 L1497.5 135 Z" fill="#e8e8e8"/></svg>
<div class="a" style="left:1521px;top:60px;width:41px;height:79px;background:#454545;"></div>
<div class="t" style="left:798.0px;top:96.23px;font-size:10px;color:#e4e4e4;letter-spacing:-0.606px;">Línea</div>
<div class="t" style="left:827.0px;top:96.23px;font-size:10px;color:#e4e4e4;letter-spacing:-0.151px;">Polilínea</div>
<div class="t" style="left:876.0px;top:96.23px;font-size:10px;color:#e4e4e4;letter-spacing:-0.241px;">Círculo</div>
<div class="t" style="left:925.0px;top:96.23px;font-size:10px;color:#e4e4e4;letter-spacing:-0.141px;">Arco</div>
<div class="t" style="left:1109.0px;top:96.23px;font-size:10px;color:#e4e4e4;letter-spacing:-0.181px;">Texto</div>
<div class="t" style="left:1186.0px;top:96.23px;font-size:10px;color:#e4e4e4;letter-spacing:-0.581px;">Capas</div>
<div class="t" style="left:1233.0px;top:96.23px;font-size:10px;color:#e4e4e4;letter-spacing:0.143px;">Bloque</div>
<div class="t" style="left:1284.0px;top:96.23px;font-size:10px;color:#e4e4e4;letter-spacing:-0.211px;">Propi...</div>
<div class="t" style="left:1332.0px;top:82.23px;font-size:10px;color:#e4e4e4;letter-spacing:-0.133px;">Grupos</div>
<div class="t" style="left:1377.0px;top:96.23px;font-size:10px;color:#e4e4e4;letter-spacing:-0.092px;">Utilidades</div>
<div class="t" style="left:1433.0px;top:96.23px;font-size:10px;color:#e4e4e4;letter-spacing:-0.281px;">Porta...</div>
<div class="t" style="left:1487.0px;top:96.23px;font-size:10px;color:#e4e4e4;letter-spacing:-0.812px;">Vista</div>
<div class="t" style="left:870.0px;top:127.23px;font-size:10px;color:#e4e4e4;letter-spacing:-0.227px;">Dibujo</div>
<div class="t" style="left:1017.0px;top:127.23px;font-size:10px;color:#e4e4e4;letter-spacing:0.158px;">Modificar</div>
<div class="t" style="left:1108.0px;top:127.23px;font-size:10px;color:#e4e4e4;letter-spacing:-0.054px;">Anotación</div>
<svg width="1566" height="880">
<path d="M903 130 L909 130 L906 133.5 Z M1064 130 L1070 130 L1067 133.5 Z M1157 130 L1163 130 L1160 133.5 Z M888 109 L892 109 L890 111.5 Z M932 109 L936 109 L934 111.5 Z M1118 109 L1122 109 L1120 111.5 Z" fill="#e8e8e8"/>
<g stroke="#c8c8c8" stroke-width="1.2" fill="none">
<path d="M799 88 L819 68"/><path d="M834 83 L846 83 Q853 83 853 77 Q853 71 846 71"/><path d="M925 89 Q928 70 947 68"/>
<path d="M1111.5 89.5 L1120.5 67 L1129.5 89.5 M1114.5 82 L1126.5 82" stroke="#e8e8e8" stroke-width="2.8"/>
<path d="M1145 69 L1145 77 M1145 73 L1158 73 M1158 69 L1158 77" stroke="#ddd"/><path d="M1147 100 L1150 93 Q1152 90 1156 90" stroke-width="1.6"/><circle cx="1159" cy="89" r="2.5" fill="#eee" stroke="none"/>
</g>
<g fill="#6a9ae0" stroke="#2a5ab8" stroke-width="0.8">
<rect x="797" y="86" width="4" height="4"/><rect x="817" y="66" width="4" height="4"/><rect x="832" y="81" width="4" height="4"/><rect x="844" y="81" width="4" height="4"/><rect x="844" y="69" width="4" height="4"/>
<rect x="923" y="86" width="4" height="4"/><rect x="931" y="73" width="4" height="4"/><rect x="945" y="66" width="4" height="4"/>
</g>
<circle cx="891" cy="77" r="11.5" fill="#d8d8d8" stroke="#999"/><path d="M890 78 L898 70" stroke="#4a8ae8" stroke-width="1.2"/><rect x="888" y="76" width="4" height="4" fill="none" stroke="#4a8ae8"/>
<rect x="958.5" y="69" width="11" height="8" rx="1" fill="#e4e4e4"/><rect x="956" y="76" width="3" height="3" fill="#4a8ae8"/><rect x="969" y="67" width="3" height="3" fill="#4a8ae8"/>
<path d="M957 95 Q957 90 963 90 Q969 90 969 95 Q969 99 963 99 Q957 99 957 95 Z" fill="#e0e0e0"/><rect x="962" y="87" width="3" height="3" fill="#4a8ae8"/><rect x="968" y="93" width="3" height="3" fill="#4a8ae8"/>
<rect x="958" y="107" width="11" height="11" fill="#7a9ae0" stroke="#999"/><path d="M958 111 L962 107 M958 115 L966 107 M960 118 L969 109 M964 118 L969 113" stroke="#c8d8f8" stroke-width="0.8"/><circle cx="958" cy="107" r="1.5" fill="#aaa"/><circle cx="969" cy="107" r="1.5" fill="#aaa"/><circle cx="958" cy="118" r="1.5" fill="#aaa"/><circle cx="969" cy="118" r="1.5" fill="#aaa"/>
<path d="M976 72 L980 72 L978 74.5 Z M976 92 L980 92 L978 94.5 Z M976 112 L980 112 L978 114.5 Z" fill="#ddd"/>
<g fill="none" stroke="#d8d8d8" stroke-width="1.4">
<path d="M995.5 73 L1007.5 73 M1001.5 67 L1001.5 79" stroke-width="1.2"/><path d="M998 70.5 L995 73 L998 75.5 M1005 70.5 L1008 73 L1005 75.5 M999 69.5 L1001.5 66.5 L1004 69.5 M999 76.5 L1001.5 79.5 L1004 76.5" stroke-width="1.3"/><ellipse cx="1001.5" cy="73" rx="3" ry="2" fill="#7aa8e8" stroke="#ddd" stroke-width="0.8"/>
<path d="M1029 68.5 A5.5 5.5 0 1 1 1023 68.5"/><path d="M1024 66 L1028 67.5 L1025 70" fill="#8ab4ea" stroke="#8ab4ea" stroke-width="1"/>
<path d="M1042 73 L1045 73 M1047 73 L1049 73" stroke="#bbb" stroke-width="1.2"/><path d="M1050 77 L1055 68" stroke="#6a9ae0" stroke-width="1.4"/><path d="M1061 72 L1065 72 L1063 74.5 Z" fill="#ddd" stroke="none"/>
<path d="M1077 80 L1089 80" stroke="#eee" stroke-width="1"/><path d="M1082 77 L1089 68" stroke="#e8a020" stroke-width="3"/><circle cx="1080.5" cy="77.5" r="2" fill="#e05020" stroke="none"/>
<circle cx="997.5" cy="89" r="3.2" fill="#ddd" stroke="none"/><circle cx="1002.5" cy="95" r="3.8" fill="#7aa8e8" stroke="#ccc" stroke-width="0.8"/><path d="M1002 88 Q1006 88 1006 91" stroke-width="1"/>
<path d="M1024.5 86 L1024.5 100" stroke="#eee" stroke-width="1"/><path d="M1023 87 L1019 99 L1023 99 Z M1026 87 L1030 99 L1026 99 Z" fill="#ddd" stroke="none"/><path d="M1026 87 L1030 99 L1026 99 Z" fill="#9ac0ee" stroke="none"/>
<path d="M1044 100 L1044 93 Q1044 87 1051 87 L1051 100 Z" fill="#e8e8e8" stroke="none"/><path d="M1042 93 Q1042 86 1048 85" stroke="#6a9ae0" stroke-width="1.6"/><path d="M1061 92 L1065 92 L1063 94.5 Z" fill="#ddd" stroke="none"/>
<path d="M1077 90 L1083 87 L1090 89 L1090 95 L1084 98 L1077 96 Z" fill="#8ab4ea" stroke="#ddd" stroke-width="0.8"/><path d="M1077 90 L1084 92 L1090 89 M1084 92 L1084 98" stroke="#ddd" stroke-width="0.8"/>
<path d="M996 106 L1001 106 L1006 117 L1001 118 L996 118 Z" fill="#f4f4f4" stroke="none"/><path d="M1001 106 L1001 118 L1006 118 Z" fill="#9ac0ee" stroke="none"/><path d="M999 114 L1003 114 M1001.5 112 L1003.5 114 L1001.5 116" stroke="#111" stroke-width="1.2"/>
<rect x="1020" y="106" width="12" height="12" fill="#8ab4ea" stroke="none"/><rect x="1020" y="110" width="8" height="8" fill="#f0f0f0" stroke="#555" stroke-width="0.6"/>
<rect x="1043.5" y="106" width="4.5" height="4.5" fill="#f0f0f0" stroke="none"/><rect x="1050" y="106" width="6" height="6" fill="#7aa8e8" stroke="none"/><rect x="1043.5" y="113" width="6" height="6" fill="#7aa8e8" stroke="none"/><rect x="1050" y="113" width="6" height="6" fill="#7aa8e8" stroke="none"/>
<path d="M1061 111 L1065 111 L1063 113.5 Z" fill="#ddd" stroke="none"/>
<path d="M1077 118 L1077 112 L1081 112 L1081 108 Q1081 106 1084 106 Q1087 106 1087 108 L1087 112 L1090 112 L1090 118 Z" stroke="#6a9ae0" stroke-width="1.2"/><path d="M1079 116 L1079 114 L1083 114 L1083 109 L1085 109 L1085 114 L1089 114" stroke="#ddd" stroke-width="0.8"/>
<path d="M1167 72 L1171 72 L1169 74.5 Z M1167 92 L1171 92 L1169 94.5 Z" fill="#ddd" stroke="none"/>
<rect x="1148" y="107" width="14" height="12" fill="#eee" stroke="none"/><path d="M1148 110.5 L1162 110.5 M1148 114 L1162 114 M1152.5 107 L1152.5 119 M1157 107 L1157 119" stroke="#777" stroke-width="0.8"/>
</g>
<g stroke="#333" stroke-width="0.8">
<path d="M1189 68 L1200 64 L1210 68 L1199 72 Z" fill="#eee"/><path d="M1189 74 L1200 70 L1210 74 L1199 78 Z" fill="#ddd"/><path d="M1189 80 L1200 76 L1210 80 L1199 84 Z" fill="#eee"/>
<rect x="1202" y="76" width="10" height="12" fill="#fff"/><rect x="1204" y="78" width="5" height="4" fill="#3a6ab8"/>
<rect x="1236" y="72" width="16" height="12" rx="1" fill="#e8e8e8"/><path d="M1246 64 L1256 64 L1261 69 L1261 82 L1246 82 Z" fill="#a8c8ee"/><circle cx="1252" cy="85" r="5" fill="#ddd"/><rect x="1236" y="84" width="3" height="3" fill="#3a6ab8"/>
</g>
<circle cx="1298" cy="76" r="12" fill="#d04a3a"/><path d="M1298 76 L1298 64 A12 12 0 0 1 1308.4 70 Z" fill="#f0a030"/><path d="M1298 76 L1308.4 70 A12 12 0 0 1 1308.4 82 Z" fill="#e8d040"/><path d="M1298 76 L1308.4 82 A12 12 0 0 1 1298 88 Z" fill="#5ab04a"/><path d="M1298 76 L1298 88 A12 12 0 0 1 1287.6 82 Z" fill="#3a7ad8"/><path d="M1298 76 L1287.6 82 A12 12 0 0 1 1287.6 70 Z" fill="#7a4ab8"/>
<rect x="1342" y="66" width="7" height="10" fill="#3a3a3a" stroke="#8a8a8a"/><path d="M1351 67 L1351 75 L1353 73 L1356 76" fill="#e0c020" stroke="#e0c020"/>
<rect x="1390" y="65" width="18" height="24" rx="1" fill="#eee" stroke="#333"/><rect x="1393" y="68" width="12" height="5" fill="#bbb"/><path d="M1393 77 L1405 77 M1393 81 L1405 81 M1393 85 L1405 85 M1397 75 L1397 88 M1401 75 L1401 88" stroke="#555"/>
<rect x="1438" y="66" width="14" height="20" fill="#d8d0c0" stroke="#555"/><path d="M1445 71 L1455 71 L1460 76 L1460 89 L1445 89 Z" fill="#fff" stroke="#555"/><rect x="1442" y="64" width="6" height="3" fill="#999"/>
<path d="M1487 86 L1487 70 L1496 70 L1498 74 L1509 74 L1509 86 Z" fill="#eee" stroke="#888"/>
</svg>
<div class="a" style="left:791px;top:139px;width:771px;height:25px;background:#3b3b3b;border-top:1px solid #2c2c2c"></div>
<svg width="1566" height="880">
<path d="M806 164 Q812 164 814 152 Q816 144 824 144 L946 144 Q954 144 956 152 Q958 164 964 164 Z" fill="#595959"/>
<path d="M960 164 Q964 164 965 156 Q966 149 972 149 L978 149 Q984 149 985 156 Q986 164 990 164 Z" fill="#474747"/>
<path d="M970 156.5 L977 156.5 M973.5 153 L973.5 160" stroke="#bbb" stroke-width="1.4"/>
<path d="M942 153 L948 159 M948 153 L942 159" stroke="#999" stroke-width="1.3"/>
</svg>
<div class="t" style="left:817.0px;top:149.73px;font-size:10px;color:#e0e0e0;letter-spacing:-0.179px;">Planimetria - casa Koshino*</div>
<div class="a" style="left:791px;top:164px;width:744px;height:687px;background:#212830;"></div>
<div class="a" style="left:1535px;top:164px;width:27px;height:687px;background:#5e5e5e;"></div>
<div class="t" style="left:793.0px;top:172.23px;font-size:10px;color:#d6d6d6;letter-spacing:-0.094px;">[−][Superior][Estructura alámbrica 2D]</div>
<svg width="1566" height="880">
<defs><clipPath id="dclip"><rect x="791" y="294" width="744" height="403"/></clipPath></defs>
<g clip-path="url(#dclip)" fill="none" stroke="#70b6b3" stroke-width="1">
<path d="M1060,295 L792,480 M1169,295 L914.5,459 L1070.7,697 M792.7,541 L885,479 L1027.5,697 M1205,295 L1280,324.3 L1300.5,333.4 L1309.5,333.4 L1326.6,324.3 L1364,294.8 M1260.7,358 L1278,356 L1327.7,371 L1331,370.5 L1363,378.9 L1439,327.7 L1461.8,314 L1484.5,303.9 L1507,300.5 L1535,302.7 M1196.8,403.3 L1239,410 L1241,416.8 L1262.5,398.5 L1277,405 L1278,397.5 L1314,409.5 L1378.9,457.3 L1400.5,448.2 L1417.5,456 L1448,439 L1486.8,424.3 L1507,411.8 L1535,406 M1403.7,696.2 L1535,656.4 M982.5,414.4 L986,418.8 L988.8,425 L1001.9,425 M1001.9,430.6 L1001.9,415 L1087.5,415 L1087.5,421 M986.9,449.4 L1066,449.4 M994.4,425 L994.4,449.5 M1001.3,430.6 L1001.3,449.4 M1008,430.6 L1008,449.4 M1014.4,430.6 L1014.4,449.4 M1021.9,430.6 L1021.9,449.4 M994,438.75 L1022,438.75 M1001.9,430.6 L1128,430.6 M1017.5,449.4 L1046,486.9 L1028.6,526.4 M1047,640 L1047,475 L1053.5,475 L1053.5,636.2 L1210.4,636.2 L1210.4,641.7 L1047,641.7 M1081,369.7 L1057.5,369.7 L1057.5,408 L1128.8,408 L1128.8,420.7 M1087.4,374.6 L1062.6,374.6 L1062.6,403.3 L1133.5,403.3 L1133.5,420.7 M1144.3,420.7 L1144.3,403.3 L1193,403.3 L1221.6,340.6 M1149.5,420.7 L1149.5,407.6 L1195.9,407.6 L1227.2,343 M1074.4,415 L1085,408.1 M1087.5,437 L1097.5,448.75 M1086.2,539.4 L1128.5,539.4 L1128.5,497.6 M1133.6,497.6 L1133.6,544.1 L1147,544.1 L1147,539.4 L1397.3,539.4 L1397.3,618.6 L1086.2,618.6 L1086.2,539.4 M1091,544.1 L1391.6,544.1 L1391.6,613.7 L1091,613.7 L1091,544.1 M1178.2,544.1 L1178.2,613.7 M1303.5,544.1 L1303.5,613.7 M1091,544.1 L1178.2,613.7 M1091,613.7 L1178.2,544.1 M1178.2,544.1 L1303.5,613.7 M1178.2,613.7 L1303.5,544.1 M1303.5,544.1 L1391.6,613.7 M1303.5,613.7 L1391.6,544.1 M1146.6,497.6 L1146.6,539.4 M1287.5,497.6 L1287.5,539.4 M1133.6,500 L1146.6,539 M1146.6,500 L1133.6,539 M1144,435 L1215,435 L1215,438.6 L1144,438.6 L1144,435 M1187,461.8 L1210,461.8 L1210,484.6 L1187,484.6 L1187,461.8 M1242,426.7 L1268.7,426.7 L1268.7,437.7 L1242,437.7 L1242,426.7 M1270,439.6 L1281.5,439.6 L1281.5,466.7 L1270,466.7 L1270,439.6 M1128.6,478.5 L1121,485.3 L1134,485.3 M1142.3,477 L1134,485.3 M1144,477 L1155.9,485.3 L1144,485.3 M1119.8,453.3 L1128.3,461.8 M1158.6,451.6 L1148.7,461.8"/>
<path d="M823,697 L854,672 L884,647 L935,600 L981,560.5 L1030,528 L1085,497.5 M937.7,697 L965,671 L994.5,645 L1026,618 L1053.6,602.5 L1086,592 M1072.3,697 Q1110,673 1148,665.7 Q1200,662 1244,669.3 Q1300,676 1343,651.6 Q1400,630 1438.7,610.3 Q1480,594 1535,575.3 M924,453.6 A32 32 0 0 0 986.9,449.4 M1075.5,381 A119 119 0 0 1 1271.4,372.5 L1267.2,375.3 A114 114 0 0 0 1079.7,383.8 Z M1088.8,371.1 A109 109 0 0 1 1221.6,340.6 M1094.4,371.8 A105 105 0 0 1 1218,347.2 M1087.4,371.8 Q1110,376 1132.4,388 L1128.8,391.5 Q1106,380 1086,376"/>
<circle cx="1399.5" cy="707" r="21"/><circle cx="1296.4" cy="353.9" r="21"/><circle cx="1037.5" cy="500.6" r="21"/><circle cx="947.5" cy="623.9" r="21"/><circle cx="1143.9" cy="648.9" r="21"/><circle cx="1097.4" cy="678.5" r="21"/><circle cx="1459.4" cy="605.5" r="21"/><circle cx="1511.3" cy="664.4" r="21"/>
<path d="M1161.0,438.6 L1161.0,449 M1164.3,438.6 L1164.3,449 M1167.6,438.6 L1167.6,449 M1170.9,438.6 L1170.9,449 M1174.2,438.6 L1174.2,449 M1177.5,438.6 L1177.5,449 M1180.8,438.6 L1180.8,449 M1184.1,438.6 L1184.1,449 M1187.4,438.6 L1187.4,449 M1190.7,438.6 L1190.7,449 M1194.0,438.6 L1194.0,449 M1197.3,438.6 L1197.3,449 M1200.6,438.6 L1200.6,449 M1203.9,438.6 L1203.9,449 M1207.2,438.6 L1207.2,449 M1210.5,438.6 L1210.5,449 M1150.0,497.6 L1150.0,539 M1153.2,497.6 L1153.2,539 M1156.4,497.6 L1156.4,539 M1159.6,497.6 L1159.6,539 M1162.8,497.6 L1162.8,539 M1166.0,497.6 L1166.0,539 M1169.2,497.6 L1169.2,539 M1172.4,497.6 L1172.4,539 M1175.6,497.6 L1175.6,539 M1178.8,497.6 L1178.8,539 M1182.0,497.6 L1182.0,539 M1185.2,497.6 L1185.2,539 M1188.4,497.6 L1188.4,539 M1191.6,497.6 L1191.6,539 M1194.8,497.6 L1194.8,539 M1198.0,497.6 L1198.0,539 M1201.2,497.6 L1201.2,539 M1204.4,497.6 L1204.4,539 M1207.6,497.6 L1207.6,539 M1210.8,497.6 L1210.8,539" stroke-width="0.8" opacity="0.85"/>
</g>
<rect x="1399.0" y="706.5" width="1" height="1" fill="#70b6b3"/><rect x="1295.9" y="353.4" width="1" height="1" fill="#70b6b3"/><rect x="1037.0" y="500.1" width="1" height="1" fill="#70b6b3"/><rect x="947.0" y="623.4" width="1" height="1" fill="#70b6b3"/><rect x="1143.4" y="648.4" width="1" height="1" fill="#70b6b3"/><rect x="1096.9" y="678.0" width="1" height="1" fill="#70b6b3"/><rect x="1458.9" y="605.0" width="1" height="1" fill="#70b6b3"/><rect x="1510.8" y="663.9" width="1" height="1" fill="#70b6b3"/>
<g fill="#66b3af" stroke="#7ccac6" stroke-width="0.6">
<rect x="1065.8" y="420.3" width="221.8" height="5.2"/>
<rect x="1282.8" y="420.3" width="4.8" height="77.3"/>
<rect x="1066" y="493" width="221.6" height="4.6"/>
<rect x="1065.8" y="449.3" width="5.1" height="48.3"/>
<rect x="1066" y="449.3" width="53.6" height="5.2"/>
<rect x="1128" y="449.3" width="20.5" height="4.5"/>
<rect x="1128" y="449.3" width="4.5" height="48.3"/>
<rect x="1144" y="449.3" width="4.5" height="48.3"/>
<rect x="1158" y="449.3" width="57" height="5"/>
<rect x="1211.3" y="449.3" width="3.7" height="48.3"/>
<rect x="1084.4" y="425" width="3.1" height="12"/>
</g>
</svg>
<svg width="1566" height="880">
<circle cx="1467.5" cy="232.8" r="42.8" fill="none" stroke="#4d545c" stroke-width="14"/>
<rect x="1446.5" y="211" width="42" height="42" fill="#bfc0c3" stroke="#9a9ca0"/>
<rect x="1453" y="217" width="29" height="30" fill="#b2b4b8"/>
<circle cx="1467" cy="186" r="0" />
</svg>
<div class="t" style="left:1449.5px;top:230.85px;font-size:7.5px;color:#555a62;font-weight:700;letter-spacing:-0.398px;">SUPERIOR</div>
<div class="t" style="left:1461.5px;top:181.35px;font-size:14px;color:#c4c4c4;font-weight:700;">N</div>
<div class="t" style="left:1462.0px;top:274.35px;font-size:14px;color:#c4c4c4;font-weight:700;">S</div>
<div class="t" style="left:1413.5px;top:227.35px;font-size:14px;color:#c4c4c4;font-weight:700;">O</div>
<div class="t" style="left:1508.0px;top:227.35px;font-size:14px;color:#c4c4c4;font-weight:700;">E</div>
<div class="a" style="left:1449px;top:302px;width:37px;height:14px;background:#7e8188;border-radius:4px"></div>
<div class="t" style="left:1453.0px;top:305.66px;font-size:9.5px;color:#3c4048;letter-spacing:-0.688px;">SCU</div>
<svg width="1566" height="880"><path d="M1474 307.5 L1479 307.5 L1476.5 310.5 Z" fill="none" stroke="#555" stroke-width="0.8"/></svg>
<div class="a" style="left:1506px;top:339px;width:27px;height:172px;background:rgba(100,104,110,0.55);border-radius:3px;border:1px solid #555a60"></div>
<svg width="1566" height="880" fill="none" stroke="#6a6e74" stroke-width="1.2">
<circle cx="1527" cy="346" r="2"/><circle cx="1527" cy="504" r="2"/>
<circle cx="1519" cy="362" r="8"/><circle cx="1519" cy="361" r="5"/><path d="M1517 378 L1521 378 L1519 380 Z M1517 436 L1521 436 L1519 438 Z M1517 468 L1521 468 L1519 470 Z"/>
<path d="M1513 405 L1513 392 M1517 403 L1517 388 M1521 403 L1521 389 M1525 405 L1525 393 M1511 398 Q1513 412 1519 413 Q1526 413 1526 403"/>
<rect x="1511" y="415" width="10" height="9"/><circle cx="1522" cy="426" r="3"/><path d="M1524 428 L1527 431"/>
<path d="M1519 445 L1519 463 M1516 448 L1519 444 L1522 448 M1508 456 Q1519 462 1530 456 M1510 453 Q1519 448 1528 453"/>
<rect x="1509" y="474" width="5" height="4"/><rect x="1516" y="474" width="5" height="4"/><rect x="1523" y="474" width="5" height="4"/><rect x="1511" y="481" width="11" height="9"/><path d="M1515 483 L1519 485.5 L1515 488 Z"/>
</svg>
<div class="a" style="left:1539px;top:166px;width:19px;height:118px;background:#595959;border:1px solid #3c3c3c"></div>
<svg width="1566" height="880" stroke="#333" stroke-width="0.8">
<path d="M1542 169 L1555 169" stroke="#888" stroke-dasharray="1 1"/>
<rect x="1543" y="175" width="7" height="5" fill="#eee"/><rect x="1545" y="178" width="8" height="5" fill="#ccd8e4"/><rect x="1547" y="181" width="8" height="5" fill="#fff"/>
<rect x="1543" y="193" width="7" height="5" fill="#eee"/><rect x="1545" y="196" width="8" height="5" fill="#ccd8e4"/><rect x="1547" y="199" width="8" height="5" fill="#fff"/>
<rect x="1543" y="211" width="8" height="7" fill="#eee"/><rect x="1546" y="214" width="9" height="7" fill="#ccd8e4"/>
<rect x="1543" y="229" width="9" height="7" fill="#fff"/><rect x="1546" y="232" width="9" height="7" fill="#ccd8e4"/>
<path d="M1541 246 L1556 246" stroke="#aaa" stroke-width="1.2"/>
<rect x="1543" y="255" width="10" height="8" fill="#fff"/><path d="M1553 262 L1556 265 L1553 265 Z" fill="#111"/>
<rect x="1543" y="271" width="8" height="6" fill="#ccd8e4"/><rect x="1546" y="275" width="8" height="6" fill="#fff"/>
</svg>
<svg width="1566" height="880">
<line x1="937.7" y1="164" x2="937.7" y2="851" stroke="#b9bcc0" stroke-width="1.6"/>
<line x1="791" y1="793.6" x2="1535" y2="793.6" stroke="#f2f2f2" stroke-width="1.3"/>
<rect x="935" y="791" width="5.5" height="5.5" fill="#212830" stroke="#eee" stroke-width="1"/>
<circle cx="906.5" cy="798.3" r="28" fill="none" stroke="#f2e600" stroke-width="3"/>
<path d="M807 794 L807 835 L848 835" fill="none" stroke="#e8e8e8" stroke-width="1.2"/>
<rect x="804" y="831" width="7" height="7" fill="none" stroke="#e8e8e8" stroke-width="1.1"/>
<path d="M809 780 L813.5 786 L818 780 M813.5 786 L813.5 791" fill="none" stroke="#d8d8d8" stroke-width="1.3"/>
<path d="M852 823 L862 833 M862 823 L852 833" fill="none" stroke="#d8d8d8" stroke-width="1.3"/>
</svg>
<div class="a" style="left:791px;top:851px;width:771px;height:24px;background:#3a3a3a;"></div>
<div class="a" style="left:791px;top:875px;width:775px;height:5px;background:#fbfbfb;"></div>
<svg width="1566" height="880">
<path d="M800 852 L851 852 Q856 852 853 860 Q850 867 844 867 L808 867 Q802 867 801 860 Z" fill="#5c5c5c"/>
<path d="M855 852 L905 852 Q910 852 907 860 Q904 867 898 867 L862 867 Q856 867 855 860 Z" fill="#4b4b4b"/>
<path d="M908 852 L958 852 Q963 852 960 860 Q957 867 951 867 L915 867 Q909 867 908 860 Z" fill="#4b4b4b"/>
<path d="M964 852 L982 852 Q985 852 983 860 Q981 866 977 866 L966 866 Q962 866 962 860 Z" fill="#4b4b4b"/>
<path d="M968.5 859 L975.5 859 M972 855.5 L972 862.5" stroke="#ccc" stroke-width="1.3"/>
<path d="M1057 856 L1060 859 L1063 856 M1057 861 L1060 864 L1063 861" stroke="#ddd" stroke-width="1.4" fill="none"/>
</svg>
<div class="t" style="left:810.0px;top:855.74px;font-size:10px;color:#f4f4f4;font-weight:700;letter-spacing:-0.333px;">Modelo</div>
<div class="t" style="left:862.0px;top:855.74px;font-size:10px;color:#c8c8c8;letter-spacing:-0.799px;">Layout1</div>
<div class="t" style="left:915.0px;top:855.74px;font-size:10px;color:#c8c8c8;letter-spacing:-0.799px;">Layout2</div>
<div class="a" style="left:1071px;top:851px;width:491px;height:24px;background:#4d4d4d;"></div>
<div class="a" style="left:1072px;top:853px;width:47px;height:20px;background:#4f4f4f;border:1px solid #3c3c3c"></div>
<div class="a" style="left:1121px;top:853px;width:52px;height:20px;background:#4f4f4f;border:1px solid #3c3c3c"></div>
<div class="a" style="left:1175px;top:853px;width:83px;height:20px;background:#4f4f4f;border:1px solid #3c3c3c"></div>
<div class="a" style="left:1260px;top:853px;width:50px;height:20px;background:#4f4f4f;border:1px solid #3c3c3c"></div>
<div class="a" style="left:1312px;top:853px;width:86px;height:20px;background:#4f4f4f;border:1px solid #3c3c3c"></div>
<div class="a" style="left:1400px;top:853px;width:32px;height:20px;background:#4f4f4f;border:1px solid #3c3c3c"></div>
<div class="a" style="left:1434px;top:853px;width:21px;height:20px;background:#4f4f4f;border:1px solid #3c3c3c"></div>
<div class="a" style="left:1456px;top:853px;width:20px;height:20px;background:#4f4f4f;border:1px solid #3c3c3c"></div>
<div class="a" style="left:1478px;top:853px;width:40px;height:20px;background:#4f4f4f;border:1px solid #3c3c3c"></div>
<div class="a" style="left:1520px;top:853px;width:40px;height:20px;background:#4f4f4f;border:1px solid #3c3c3c"></div>
<div class="t" style="left:1075.0px;top:858.84px;font-size:10px;color:#ececec;letter-spacing:-0.391px;">MODELO</div>
<svg width="1566" height="880" fill="none" stroke="#cfcfcf" stroke-width="1.1">
<path d="M1126 857 L1126 869 M1129 857 L1129 869 M1132 857 L1132 869 M1135 857 L1135 869 M1124 860 L1137 860 M1124 863 L1137 863 M1124 866 L1137 866" stroke-width="0.9"/>
<path d="M1145 858 L1158 858 M1145 861 L1158 861 M1145 864 L1158 864 M1145 867 L1158 867" stroke-dasharray="1 2" stroke-width="1"/>
<path d="M1165 862 L1171 862 L1168 865.5 Z M1218 862 L1224 862 L1221 865.5 Z M1250 862 L1256 862 L1253 865.5 Z M1302 862 L1308 862 L1305 865.5 Z M1389 862 L1395 862 L1392 865.5 Z M1423 862 L1429 862 L1426 865.5 Z" fill="#eee" stroke="none"/>
<path d="M1181 857 L1181 869 L1191 869 M1181 864 L1184 864 L1184 869"/>
<circle cx="1205" cy="863" r="6" stroke="#3a8ae8" stroke-width="1.8"/><path d="M1205 863 L1210 858" stroke="#3a8ae8" stroke-width="1.4"/>
<path d="M1231 857 L1244 870 M1237 855 L1237 871" stroke="#aaa"/>
<path d="M1262 870 L1275 870 M1263 869 L1272 859" stroke="#3a8ae8" stroke-width="1.6"/>
<rect x="1284" y="857" width="11" height="12" stroke="#3a8ae8" stroke-width="1.6"/><circle cx="1285" cy="857" r="2" fill="#2ab040" stroke="#111"/>
<path d="M1323 860 L1323 864 L1317 870 M1323 864 L1329 870" stroke="#3a8ae8" stroke-width="2.4"/><circle cx="1327" cy="859" r="2.5" stroke="#3a8ae8"/>
<path d="M1343 857 L1343 864 L1337 870 M1343 864 L1349 870" stroke="#bbb" stroke-width="2.2"/>
<path d="M1363 857 L1363 864 L1357 870 M1363 864 L1369 870" stroke="#bbb" stroke-width="2.2"/>
<circle cx="1408" cy="863" r="3.5" stroke="#aaa" stroke-width="3" stroke-dasharray="2 1.2"/><circle cx="1408" cy="863" r="1.5" fill="#aaa" stroke="none"/>
<path d="M1437 863 L1449 863 M1443 857 L1443 869" stroke="#ddd" stroke-width="1.6"/>
<circle cx="1466" cy="863" r="7" stroke="#1a5ac8" stroke-width="1.6" fill="#1a5ac8"/><path d="M1463 864 L1466 866 L1469 861" stroke="#8ab8f8"/>
<rect x="1481" y="858" width="12" height="9" fill="#e0c040" stroke="#88a"/><path d="M1488 866 L1491 869 L1496 862" stroke="#4ab04a" stroke-width="1.6"/>
<rect x="1500" y="857" width="6" height="6" stroke="#ccc"/><circle cx="1510" cy="860" r="3" stroke="#ccc"/><path d="M1502 870 L1505 865 L1508 870 Z" stroke="#ccc"/>
<rect x="1524" y="857" width="13" height="11" stroke="#ccc"/><path d="M1527 866 L1533 860 M1530 860 L1533 860 L1533 863" stroke="#ccc"/>
<path d="M1544 858 L1558 858 M1544 863 L1558 863 M1544 868 L1558 868" stroke="#ddd" stroke-width="1.5"/>
</svg>
<div class="t" style="left:1376.0px;top:858.81px;font-size:10.5px;color:#ddd;letter-spacing:-0.870px;">1:1</div>
<div class="a" style="left:594px;top:830px;width:972px;height:21px;background:rgba(220,221,223,0.86);border-top:1px solid #888;border-bottom:1px solid #888"></div>
<div class="a" style="left:594px;top:830px;width:44px;height:21px;background:linear-gradient(#8a8a8a,#6a6a6a);border-radius:3px 0 0 3px"></div>
<div class="a" style="left:638px;top:831px;width:148px;height:19px;background:rgba(250,250,250,0.9);"></div>
<svg width="1566" height="880" fill="none">
<path d="M598 834 L598 847 M600 834 L600 847" stroke="#bbb" stroke-dasharray="1 1"/>
<path d="M606 836 L614 844 M614 836 L606 844" stroke="#fff" stroke-width="1.8"/>
<path d="M621.5 837.5 A3.5 3.5 0 1 0 626 835" stroke="#fff" stroke-width="2"/><path d="M625.5 840.5 L632 847" stroke="#fff" stroke-width="2.6"/>
<rect x="642" y="834" width="11" height="12" fill="#e8eef4" stroke="#aab"/><path d="M644 837 L647 840 L644 843 M648 843 L651 843" stroke="#667" stroke-width="0.9"/>
<path d="M657 838 L661 838 L659 840.5 Z" fill="#999"/>
</svg>
<div class="t" style="left:667.0px;top:836.31px;font-size:10.5px;color:#a4a4a4;font-style:italic;font-family:'Liberation Mono',monospace;letter-spacing:-0.579px;">Escriba un comando</div>
</body></html>
